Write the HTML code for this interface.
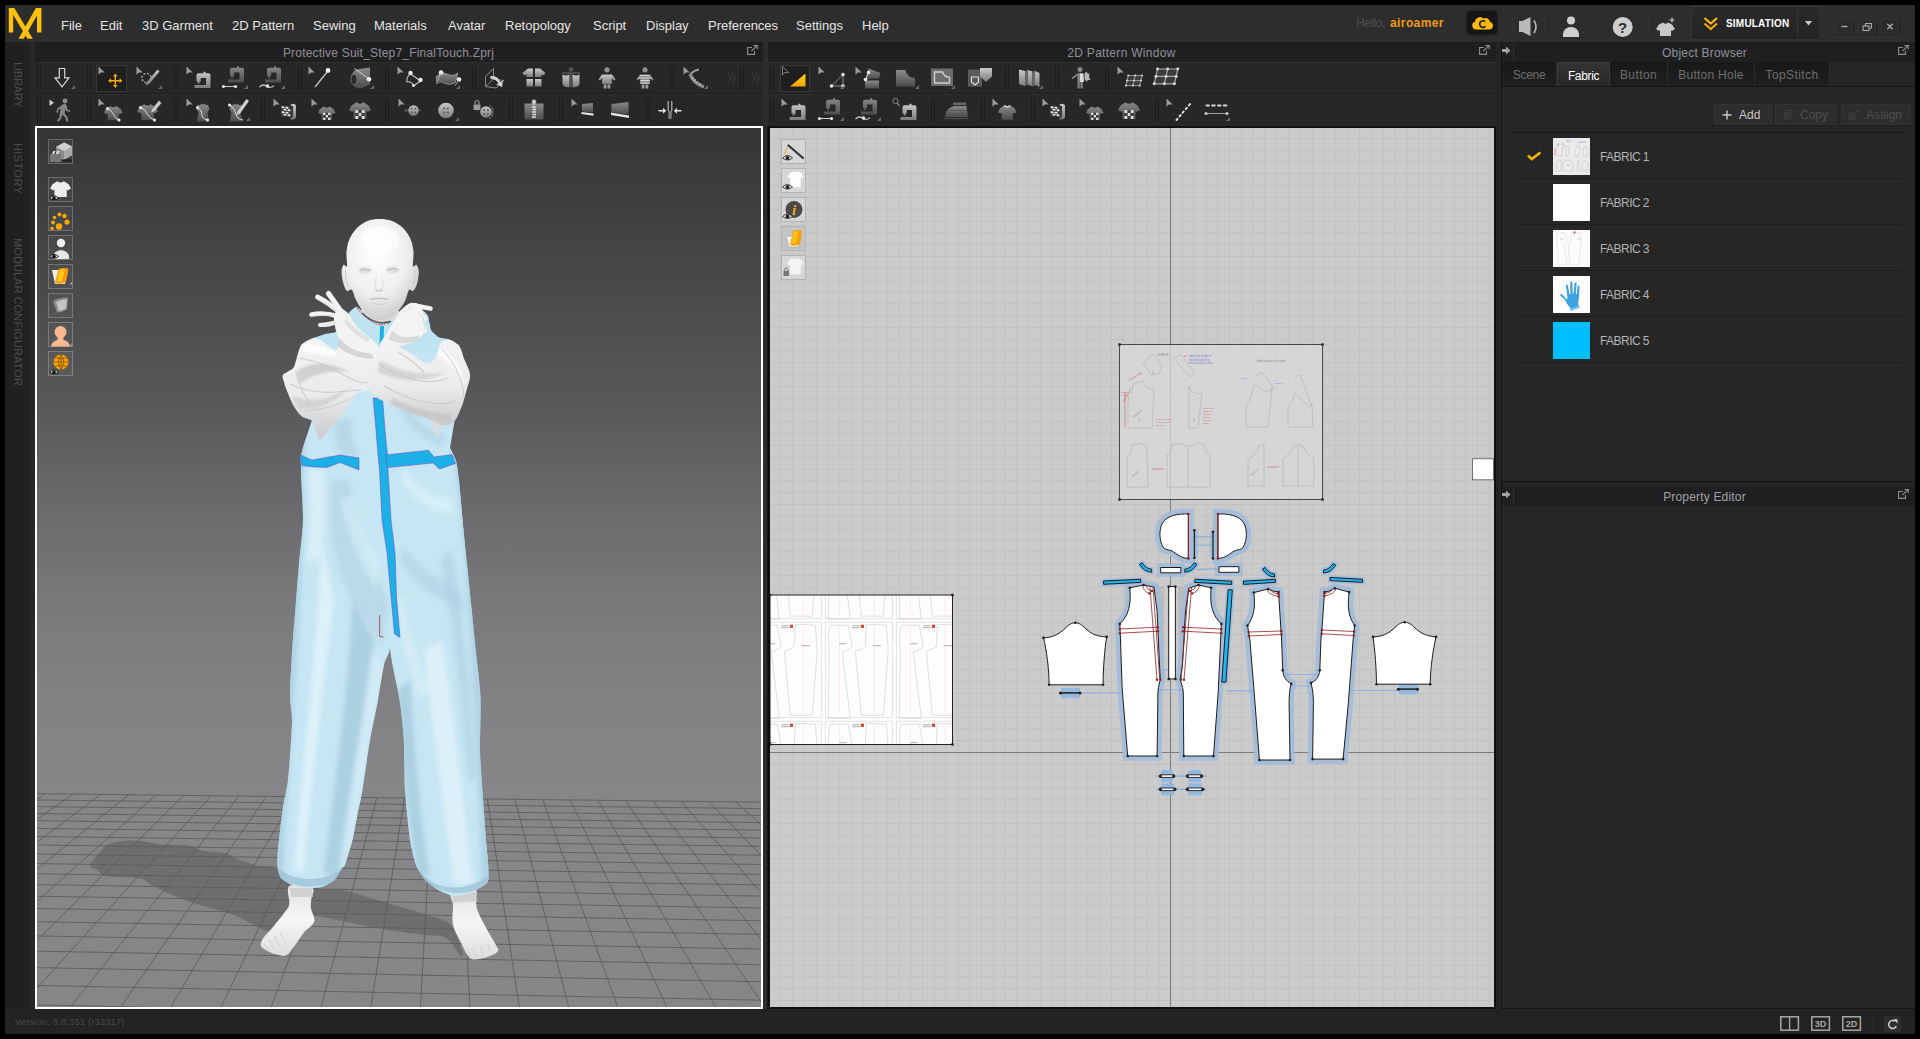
<!DOCTYPE html>
<html lang="en">
<head>
<meta charset="utf-8">
<title>Marvelous Designer - Protective Suit_Step7_FinalTouch.Zprj</title>
<style>
*{box-sizing:border-box;margin:0;padding:0}
html,body{width:1920px;height:1039px;overflow:hidden;background:#000}
body{font-family:"Liberation Sans",sans-serif;font-size:12px;color:#b4b4b4;position:relative}
.abs{position:absolute}
#app{position:absolute;left:5px;top:5px;width:1910px;height:1029px;background:#2c2c2c;overflow:hidden}
/* everything inside #app is positioned in page coordinates via this shim */
#pg{position:absolute;left:-5px;top:-5px;width:1920px;height:1039px}
#menubar{position:absolute;left:5px;top:5px;width:1910px;height:37px;background:#2d2d2d}
.mi{position:absolute;top:18px;height:16px;line-height:16px;font-size:13px;color:#e4e4e4;white-space:nowrap}
.title{position:absolute;top:42px;height:20px;background:#1f1f22;color:#8f9197;font-size:12px;line-height:20px;text-align:center;white-space:nowrap}
.tb{position:absolute;background:#272727}
#leftbar{position:absolute;left:5px;top:42px;width:30px;height:967px;background:linear-gradient(90deg,#202020 0,#202020 25px,#282828 25px)}
.vtxt{position:absolute;left:11px;width:14px;color:#4e4e4e;font-size:11px;letter-spacing:.4px;white-space:nowrap;transform-origin:0 0;transform:rotate(90deg) translate(0,-14px);line-height:14px;height:14px}
#status{position:absolute;left:5px;top:1009px;width:1910px;height:25px;background:#232323}
#v3d{position:absolute;left:35px;top:126px;width:728px;height:883px;border:2px solid #fff;overflow:hidden;background:linear-gradient(#353537 0%,#58585a 31%,#69696b 42.300%,#79797b 53.700%,#828284 65%,#868688 75.600%,#868688 100%)}
#v2d{position:absolute;left:768px;top:126px;width:728px;height:883px;border:2px solid #0f0f0f;box-shadow:-1px 0 0 #151515;overflow:hidden;background:#cbcbcb}
#rpanel{position:absolute;left:1502px;top:62px;width:1413px}
</style>
</head>
<body>
<div id="app"><div id="pg">

<!-- MENU BAR -->
<div id="menubar"></div>
<div id="menu-items">
<span class="mi" style="left:61px">File</span>
<span class="mi" style="left:100px">Edit</span>
<span class="mi" style="left:142px">3D Garment</span>
<span class="mi" style="left:232px">2D Pattern</span>
<span class="mi" style="left:313px">Sewing</span>
<span class="mi" style="left:374px">Materials</span>
<span class="mi" style="left:448px">Avatar</span>
<span class="mi" style="left:505px">Retopology</span>
<span class="mi" style="left:593px">Script</span>
<span class="mi" style="left:646px">Display</span>
<span class="mi" style="left:708px">Preferences</span>
<span class="mi" style="left:796px">Settings</span>
<span class="mi" style="left:862px">Help</span>
</div>
<div class="abs" style="left:1356px;top:16px;font-size:12px;line-height:15px;color:#4f4f4f;white-space:nowrap;letter-spacing:-.2px">Hello,</div>
<div class="abs" style="left:1390px;top:16px;font-size:12px;line-height:15px;color:#f49b0c;font-weight:bold;white-space:nowrap;letter-spacing:.4px">airoamer</div>
<div class="abs" style="left:1453px;top:15px;width:1px;height:18px;background:#333"></div>
<div class="abs" style="left:1512px;top:15px;width:1px;height:18px;background:#333"></div>
<div class="abs" style="left:1544px;top:15px;width:1px;height:18px;background:#333"></div>
<div class="abs" style="left:1597px;top:15px;width:1px;height:18px;background:#333"></div>
<div class="abs" style="left:1648px;top:15px;width:1px;height:18px;background:#333"></div>
<svg class="abs" style="left:1460px;top:5px" width="230" height="37" viewBox="1460 5 230 37">
<rect x="1466.5" y="10.5" width="31" height="24.5" rx="4" fill="#161616" stroke="#222" stroke-width="1"/>
<path d="M1476 29.5a4 4 0 0 1 -1 -7.8a5 5 0 0 1 8.5 -3.2a4.5 4.5 0 0 1 6.5 3.5a3.8 3.8 0 0 1 -1 7.5z" fill="#fbb90f"/>
<path d="M1485.2 21.6a3.3 3.3 0 1 0 .3 4.6" stroke="#1b1b1b" stroke-width="1.7" fill="none"/>
<path d="M1519 22h3.5l8 -4v19l-8 -4H1519z" fill="#b9b9b9" transform="translate(0 -1)"/><path d="M1534 20.5q4 6 0 12.5" stroke="#b9b9b9" stroke-width="1.6" fill="none"/>
<circle cx="1571" cy="20.5" r="4" fill="#cfcfcf"/><path d="M1563 37v-3a8 7 0 0 1 16 0v3z" fill="#cfcfcf"/>
<circle cx="1622.7" cy="27" r="10" fill="#cdcdcd"/><text x="1622.7" y="32.5" font-family="'Liberation Sans',sans-serif" font-weight="bold" font-size="15" text-anchor="middle" fill="#2b2b2b">?</text>
<path d="M1659 24.5l4 -2q2.5 2.5 5 0l4 2l3 4.5l-3.2 2l-.8 -1v6h-11v-6l-.8 1l-3.2 -2z" fill="#c9c9c9"/><path d="M1672 17.5v5M1669.5 20h5" stroke="#c9c9c9" stroke-width="1.2"/>
</svg>
<div class="abs" style="left:1691px;top:6px;width:129px;height:34px;background:linear-gradient(#2a2a2a,#232323);border:1px solid #333;border-top-color:#3a3a3a"></div>
<div class="abs" style="left:1797px;top:9px;width:1px;height:28px;background:#353535"></div>
<svg class="abs" style="left:1703px;top:16px" width="16" height="16" viewBox="0 0 16 16"><path d="M1.5 2L7.8 7.5L14 2" stroke="#fbb90f" stroke-width="2.2" fill="none"/><path d="M1.5 7.5L7.8 13L14 7.5" stroke="#f9a90a" stroke-width="2.2" fill="none"/></svg>
<div class="abs" style="left:1726px;top:17px;font-size:10px;line-height:13px;font-weight:bold;color:#fff;letter-spacing:.2px;white-space:nowrap">SIMULATION</div>
<svg class="abs" style="left:1805px;top:21px" width="8" height="5" viewBox="0 0 8 5"><path d="M0 0h7L3.5 4.6z" fill="#c9c9c9"/></svg>
<div class="abs" style="left:1835px;top:19px;width:18px;height:15px;background:#2b2b2b;border:1px solid #333;box-shadow:1px 1px 0 #1e1e1e"></div>
<div class="abs" style="left:1858px;top:19px;width:18px;height:15px;background:#2b2b2b;border:1px solid #333;box-shadow:1px 1px 0 #1e1e1e"></div>
<div class="abs" style="left:1881px;top:19px;width:18px;height:15px;background:#2b2b2b;border:1px solid #333;box-shadow:1px 1px 0 #1e1e1e"></div>
<svg class="abs" style="left:1835px;top:19px" width="66" height="15" viewBox="1835 19 66 15"><path d="M1841.5 26.5h6" stroke="#aaa" stroke-width="1.4"/><rect x="1863" y="26" width="6" height="4.5" fill="none" stroke="#aaa" stroke-width="1.1"/><path d="M1865.5 26v-2.5h6v4.5h-2.5" fill="none" stroke="#aaa" stroke-width="1.1"/><path d="M1887.3 23.8l5.4 5.4M1892.7 23.8l-5.4 5.4" stroke="#aaa" stroke-width="1.3"/></svg>
<svg class="abs" style="left:0;top:0" width="50" height="42" viewBox="0 0 50 42"><g fill="#fdc00d"><path d="M8.800 8h4.400V32.500H8.800z"/><path d="M37 8h4.400V32.500H37z"/><path d="M9 8h5.300L32.800 38.800h-5.300z"/><path d="M41.200 8H35.900L18.500 38.800h5.300z"/></g></svg>

<!-- LEFT BAR -->
<div id="leftbar"></div>
<div class="vtxt" style="top:62px;letter-spacing:-.2px">LIBRARY</div>
<div class="vtxt" style="top:143px">HISTORY</div>
<div class="vtxt" style="top:238px;letter-spacing:.08px">MODULAR CONFIGURATOR</div>

<!-- TITLES -->
<div class="title" style="left:35px;width:728px"><span style="position:relative;left:-10.5px;top:1px;letter-spacing:.19px">Protective Suit_Step7_FinalTouch.Zprj</span></div>
<div class="title" style="left:768px;width:728px"><span style="position:relative;left:-10.5px;top:1px;letter-spacing:.3px">2D Pattern Window</span></div>
<div class="title" style="left:1502px;width:413px"><span style="position:relative;left:-4px;top:1px;letter-spacing:.22px">Object Browser</span></div>

<!-- TOOLBARS -->
<div class="tb" style="left:35px;top:62px;width:728px;height:64px"></div>
<div class="tb" style="left:768px;top:62px;width:728px;height:64px"></div>
<div class="abs" style="left:35px;top:93px;width:728px;height:2px;background:#1e1e1e;border-bottom:1px solid #2e2e2e"></div>
<div class="abs" style="left:768px;top:93px;width:728px;height:2px;background:#1e1e1e;border-bottom:1px solid #2e2e2e"></div>
<div class="abs" style="left:35px;top:62px;width:728px;height:1px;background:#2f2f2f"></div>
<div class="abs" style="left:768px;top:62px;width:728px;height:1px;background:#2f2f2f"></div>
<svg class="abs" style="left:0;top:60px" width="1500" height="68" viewBox="0 60 1500 68">
<defs>
<linearGradient id="ig" x1="0" y1="0" x2="0" y2="1"><stop offset="0" stop-color="#c9c9c9"/><stop offset="1" stop-color="#7b7b7b"/></linearGradient>
<linearGradient id="igd" x1="0" y1="0" x2="0" y2="1"><stop offset="0" stop-color="#8a8a8a"/><stop offset="1" stop-color="#4c4c4c"/></linearGradient>
<linearGradient id="igy" x1="0" y1="0" x2="0" y2="1"><stop offset="0" stop-color="#ffd21a"/><stop offset="1" stop-color="#f7a400"/></linearGradient>
<path id="cur" d="M0 0V8.2L2.3 6.1H6.2Z" fill="#9c9c9c"/>
<path id="tri" d="M4 0V4H0Z" fill="#6a6a6a"/>
<path id="sm" d="M0 15.500V12.500H11.500V5.500H6.200V9H5V11H3.200V9H2V2.800Q2 .800 4 .800H9V-.800H11V.800H14Q16 .800 16 2.800V15.500Z"/>
<path id="shirt" d="M0 4.5L5 1.2Q8.5 4.3 12 1.2L17 4.5L19.5 9L16 11L15 9.8V18H2V9.8L1 11L-2.5 9Z"/>
</defs>
<path d="M37.5 66v24M40.5 66v24" stroke="#1b1b1b" stroke-width="1"/>
<path d="M87.5 66v24M90.5 66v24" stroke="#1b1b1b" stroke-width="1"/>
<path d="M174.5 66v24M177.5 66v24" stroke="#1b1b1b" stroke-width="1"/>
<path d="M298.5 66v24M301.5 66v24" stroke="#1b1b1b" stroke-width="1"/>
<path d="M385.5 66v24M388.5 66v24" stroke="#1b1b1b" stroke-width="1"/>
<path d="M472.5 66v24M475.5 66v24" stroke="#1b1b1b" stroke-width="1"/>
<path d="M670.5 66v24M673.5 66v24" stroke="#1b1b1b" stroke-width="1"/>
<path d="M740.5 66v24M743.5 66v24" stroke="#1b1b1b" stroke-width="1"/>
<path d="M37.5 98v24M40.5 98v24" stroke="#1b1b1b" stroke-width="1"/>
<path d="M87.5 98v24M90.5 98v24" stroke="#1b1b1b" stroke-width="1"/>
<path d="M174.5 98v24M177.5 98v24" stroke="#1b1b1b" stroke-width="1"/>
<path d="M261.5 98v24M264.5 98v24" stroke="#1b1b1b" stroke-width="1"/>
<path d="M385.5 98v24M388.5 98v24" stroke="#1b1b1b" stroke-width="1"/>
<path d="M509.5 98v24M512.5 98v24" stroke="#1b1b1b" stroke-width="1"/>
<path d="M559.5 98v24M562.5 98v24" stroke="#1b1b1b" stroke-width="1"/>
<path d="M646.5 98v24M649.5 98v24" stroke="#1b1b1b" stroke-width="1"/>
<path d="M770.5 66v24M773.5 66v24" stroke="#1b1b1b" stroke-width="1"/>
<path d="M1005.5 66v24M1008.5 66v24" stroke="#1b1b1b" stroke-width="1"/>
<path d="M1055.5 66v24M1058.5 66v24" stroke="#1b1b1b" stroke-width="1"/>
<path d="M1105.5 66v24M1108.5 66v24" stroke="#1b1b1b" stroke-width="1"/>
<path d="M770.5 98v24M773.5 98v24" stroke="#1b1b1b" stroke-width="1"/>
<path d="M931.5 98v24M934.5 98v24" stroke="#1b1b1b" stroke-width="1"/>
<path d="M981.5 98v24M984.5 98v24" stroke="#1b1b1b" stroke-width="1"/>
<path d="M1031.5 98v24M1034.5 98v24" stroke="#1b1b1b" stroke-width="1"/>
<path d="M1155.5 98v24M1158.5 98v24" stroke="#1b1b1b" stroke-width="1"/>
<g transform="translate(48.0 64.0)"><path d="M11.300 4.500h5.400v9.300h4.300L14 22.800L7 13.800h4.300z" fill="none" stroke="#dcdcdc" stroke-width="1.150" stroke-linejoin="miter"/><use href="#tri" x="23" y="21"/></g>
<rect x="96.5" y="65.5" width="30" height="26" fill="#1e1e1e" stroke="#383838"/>
<g transform="translate(97.0 64.0)"><use href="#cur" x="1.5" y="2.5"/><g transform="translate(18.3 16.7)" fill="#f7ab00"><path d="M-.7 -5h1.4v10h-1.4zM-5 -.7h10v1.4h-10z"/><path d="M0 -7.2l2.4 3h-4.8zM0 7.2l2.4 -3h-4.8zM-7.2 0l3 -2.4v4.8zM7.2 0l-3 -2.4v4.8z"/></g></g>
<g transform="translate(135.0 64.0)"><use href="#cur" x="1.5" y="2.5"/><circle cx="11.5" cy="14" r="4.6" fill="none" stroke="#b5b5b5" stroke-width="1.3" stroke-dasharray="2 1.6"/><path d="M22.5 5.5l2 2L14 20l-3.5 1.5L12 18z" fill="url(#ig)"/><use href="#tri" x="23" y="21"/></g>
<g transform="translate(185.0 64.0)"><use href="#cur" x="1.5" y="2.5"/><use href="#sm" x="9.5" y="8.5" fill="url(#ig)"/></g>
<g transform="translate(221.0 64.0)"><use href="#sm" x="7" y="3" fill="url(#igd)"/><path d="M2.5 22.5h12" stroke="#d0d0d0" stroke-width="1"/><circle cx="2.5" cy="22.5" r="1.6" fill="#e6e6e6"/><circle cx="14.5" cy="22.5" r="1.6" fill="#e6e6e6"/><use href="#tri" x="23" y="21"/></g>
<g transform="translate(258.0 64.0)"><use href="#sm" x="7" y="3" fill="url(#igd)"/><path d="M1.5 23q3.5-3.5 7-.8t7.5-.4" stroke="#bdbdbd" stroke-width="1.3" fill="none"/><circle cx="9.5" cy="22" r="1.7" fill="#eaeaea"/><use href="#tri" x="23" y="21"/></g>
<g transform="translate(307.0 64.0)"><use href="#cur" x="1.5" y="2.5"/><path d="M8 23L20.5 7.5" stroke="#c9c9c9" stroke-width="1.2"/><circle cx="21" cy="6.5" r="2.4" fill="#ededed"/></g>
<g transform="translate(347.0 64.0)"><path d="M4 14q0-7 8-9l11-1.5v17l-8 3.5q-6 1-9-3z" fill="url(#igd)"/><ellipse cx="7" cy="15.5" rx="3" ry="5.2" fill="#2a2a2a" stroke="#777" stroke-width=".8"/><path d="M7.5 4.5L22 15" stroke="#d5d5d5" stroke-width="1"/><circle cx="22" cy="15.2" r="2.3" fill="#efefef"/><use href="#tri" x="23" y="21"/></g>
<g transform="translate(396.0 64.0)"><use href="#cur" x="1.5" y="2.5"/><path d="M14 9.5q-4 5-3 8.5q4-1 7 3.5q3-2 6.500-4.500" stroke="#c5c5c5" stroke-width="1.1" fill="none"/><path d="M14 9.5q5 3.500 10.500 7.500" stroke="#c5c5c5" stroke-width="1.1" fill="none"/><circle cx="14.5" cy="9" r="2.2" fill="#ececec"/><circle cx="24.5" cy="16" r="2.2" fill="#ececec"/><circle cx="17.5" cy="21.5" r="1.6" fill="#dcdcdc"/></g>
<g transform="translate(433.0 64.0)"><path d="M3 13q5-6 11-3t11-1l-3 10q-6 3-11 0t-7 1z" fill="url(#igd)" stroke="#aaa" stroke-width=".7"/><circle cx="8" cy="8.500" r="2.300" fill="#ececec"/><circle cx="26" cy="15.5" r="2.300" fill="#ececec"/><path d="M8 8.500L4.500 17M26 15.500L22 22" stroke="#bbb" stroke-width=".8"/><use href="#tri" x="23" y="21"/></g>
<g transform="translate(481.0 64.0)"><path d="M4.500 22.500V12.500L12.500 4.500V15l10.500 1.500l-8 7.500z" fill="none" stroke="#8a8a8a" stroke-width="1"/><path d="M12.500 15L4.500 22.500" stroke="#8a8a8a" stroke-width="1"/><path d="M9.500 12q7-1 10 6l2.200-1.500l-.5 6.500l-6-2.500l2.200-1.200q-2.500-4.500-7.900-4.300z" fill="#d4d4d4"/></g>
<g transform="translate(520.0 64.0)"><path d="M2.500 9L8 4.500h5V13H6.500v-2.800L4.500 11.500zM25.500 9L20 4.500h-5V13h6.500v-2.800l2 1.300z" fill="url(#ig)"/><rect x="6.500" y="15" width="6.500" height="7.500" fill="url(#ig)"/><rect x="15" y="15" width="6.500" height="7.500" fill="url(#ig)"/></g>
<g transform="translate(557.0 64.0)"><circle cx="14" cy="5.500" r="2.300" fill="#555"/><path d="M5 9h18" stroke="#555" stroke-width="1.600"/><path d="M13 8h2v15h-2z" fill="#4a4a4a"/><path d="M5.500 10.500q3.500 2 7 0V23q-5 1-7-3zM22.500 10.500q-3.500 2-7 0V23q5 1 7-3z" fill="url(#ig)"/></g>
<g transform="translate(593.0 64.0)"><circle cx="14" cy="5.800" r="2.600" fill="#8f8f8f"/><path d="M9 10.500h10l3.500 5l-1.200 1l-2.500-2.500v6h-9.600v-6L6.700 16.500l-1.200-1z" fill="url(#ig)"/><path d="M10.700 20.500h2.800v4h-2.800zM14.500 20.500h2.800v4h-2.800z" fill="#9a9a9a"/></g>
<g transform="translate(631.0 64.0)"><circle cx="14" cy="5.800" r="2.600" fill="#8f8f8f"/><path d="M9 10.500h10l3.500 5l-1.200 1l-2.500-2.500v6h-9.600v-6L6.700 16.500l-1.200-1z" fill="#8a8a8a"/><path d="M9 11.500h10M7 14h14M9.200 16.500h9.600M9.200 19h9.600" stroke="#d8d8d8" stroke-width="1.100"/><path d="M10.700 20.500h2.800v4h-2.800zM14.500 20.500h2.800v4h-2.800z" fill="#9a9a9a"/></g>
<g transform="translate(681.0 64.0)"><use href="#cur" x="2.5" y="2.5"/><path d="M9 10q3 9 14 13" stroke="#8c8c8c" stroke-width="3.400" fill="none"/><path d="M11 14.500l2-1M13 17l1.800-1.500M15.500 19.200l1.500-1.800M18.500 21l1-2" stroke="#ddd" stroke-width=".9"/><path d="M9.500 10q4-4 8.500-4.500" stroke="#9a9a9a" stroke-width="1.800" fill="none"/><use href="#tri" x="23" y="21"/></g>
<path d="M728 73l3 5.500l-3 5.500M732 73l3 5.500l-3 5.500" stroke="#3a3a3a" stroke-width="1.200" fill="none"/>
<path d="M752 73l3 5.500l-3 5.500M756 73l3 5.500l-3 5.500" stroke="#3a3a3a" stroke-width="1.200" fill="none"/>
<g transform="translate(48.0 96.0)"><circle cx="17" cy="5" r="2.400" fill="#8d8d8d"/><path d="M15.500 8q2.500-1 3.200 1.500l.8 4l3 1.200l-.5 1.400l-3.800-1l-1-2l-.5 4.500l2.800 3.500l.8 4.500h-2l-.9-3.800l-3-3l-1.300 3.800l-2.500 3.200l-1.700-1l2.400-3.200l1.300-9l-2 1.200l-.7 3l-1.600-.3l.8-4z" fill="#858585"/><path d="M1.500 3.500l4.500 3.300l-4.500 3.300z" fill="#d0d0d0"/></g>
<g transform="translate(97.0 96.0)"><use href="#cur" x="1.5" y="2.5"/><g transform="translate(9 9) scale(.85)"><use href="#shirt" fill="url(#igd)"/></g><path d="M10.500 12.500q4.500 2 6 6t5.500 5.500" stroke="#d8d8d8" stroke-width="1" fill="none"/><circle cx="10.500" cy="12.500" r="1.600" fill="#eee"/><circle cx="22" cy="24" r="1.600" fill="#eee"/></g>
<g transform="translate(135.0 96.0)"><g transform="translate(4.500 7) scale(.95)"><use href="#shirt" fill="url(#igd)"/></g><path d="M5.500 11.500q5 2 7 6.500t7 6" stroke="#d8d8d8" stroke-width="1" fill="none"/><circle cx="5.500" cy="11.500" r="1.600" fill="#eee"/><circle cx="19.500" cy="24" r="1.600" fill="#eee"/><path d="M24 4.500l2.500 2.500l-7 8.500l-4 1.500l1.500-4z" fill="#cfcfcf" stroke="#555" stroke-width=".5"/></g>
<g transform="translate(185.0 96.0)"><use href="#cur" x="1.5" y="2.5"/><g transform="translate(4 2)"><path d="M9 6.500q2 1.500 3.500-1q1.500 2 3 0q1.500 2.500 3.500 1l1.500 5q-3 3-1.500 6l1.500 6H7.500l1.500-6q1.500-3-1.500-6z" fill="url(#igd)"/></g><path d="M12.500 11.500q5 3 4.500 7t5.500 5.500" stroke="#e0e0e0" stroke-width="1" fill="none"/><circle cx="12.500" cy="11.500" r="1.500" fill="#eee"/><circle cx="22.500" cy="24" r="1.500" fill="#eee"/></g>
<g transform="translate(223.0 96.0)"><g transform="translate(-1 2)"><path d="M9 6.500q2 1.500 3.500-1q1.500 2 3 0q1.500 2.500 3.500 1l1.500 5q-3 3-1.500 6l1.500 6H7.500l1.500-6q1.500-3-1.500-6z" fill="url(#igd)"/></g><path d="M6.500 9q6 4 6.500 9t7 6" stroke="#e0e0e0" stroke-width="1" fill="none"/><circle cx="6.500" cy="9" r="1.500" fill="#eee"/><path d="M23.500 3l2.500 2l-9 12.500l-3.500 1.500l1-3.500z" fill="#d2d2d2"/><use href="#tri" x="23" y="21"/></g>
<g transform="translate(272.0 96.0)"><use href="#cur" x="1.5" y="2.5"/><g transform="translate(9 8)"><path d="M0 3l4-2l8 3v11l-8-3l-4 1.500z" fill="#3a3a3a"/><path d="M0 3l2-1l2 1.500l-2 1zM4 3.500l2-1l2 1.500l-2 1zM2 5.500l2-1l2 1.500l-2 1zM0 8l2-1l2 1.500l-2 1zM4 8.500l2-1l2 1.500l-2 1zM2 10.500l2-1l2 1.500l-2 1zM6 6l2-1l2 1.500l-2 1zM6 11l2-1l2 1.500l-2 1z" fill="#e8e8e8"/><path d="M9 1q4.500-2.500 6 .5v12q-2 3-6 1.500q3-1 3-3V2.500q-1.500-1-3-1.500z" fill="url(#ig)"/></g></g>
<g transform="translate(310.0 96.0)"><use href="#cur" x="1.5" y="2.5"/><g transform="translate(10 9.500) scale(.8)"><use href="#shirt" fill="url(#igd)"/><g transform="translate(-1 1.500)"><path d="M5 7.500h3v3h-3zM11 7.500h3v3h-3zM8 10.500h3v3h-3zM5 13.500h3v3h-3zM11 13.500h3v3h-3z" fill="#dedede"/><path d="M8 7.500h3v3h-3zM5 10.500h3v3h-3zM11 10.500h3v3h-3zM8 13.500h3v3h-3z" fill="#3c3c3c"/></g></g></g>
<g transform="translate(346.0 96.0)"><g transform="translate(5.500 5) scale(1)"><use href="#shirt" fill="url(#igd)"/><g transform="translate(-1 1.500)"><path d="M5 7.500h3v3h-3zM11 7.500h3v3h-3zM8 10.500h3v3h-3zM5 13.500h3v3h-3zM11 13.500h3v3h-3z" fill="#dedede"/><path d="M8 7.500h3v3h-3zM5 10.500h3v3h-3zM11 10.500h3v3h-3zM8 13.500h3v3h-3z" fill="#3c3c3c"/></g></g></g>
<g transform="translate(397.0 96.0)"><use href="#cur" x="1.5" y="2.5"/><path d="M8.500 14.500h16" stroke="#555" stroke-width="1"/><circle cx="9" cy="14.500" r="1.200" fill="none" stroke="#666" stroke-width=".7"/><g transform="translate(16.500 14.500)"><circle cx="0" cy="0" r="5.2" fill="url(#ig)"/><g fill="#5a5a5a"><circle cx="-1.900" cy="-1.900" r="1"/><circle cx="1.900" cy="-1.900" r="1"/><circle cx="-1.900" cy="1.900" r="1"/><circle cx="1.900" cy="1.900" r="1"/></g></g></g>
<g transform="translate(432.0 96.0)"><g transform="translate(14 14.500)"><circle cx="0" cy="0" r="7.8" fill="url(#ig)"/><g fill="#5a5a5a"><circle cx="-1.900" cy="-1.900" r="1"/><circle cx="1.900" cy="-1.900" r="1"/><circle cx="-1.900" cy="1.900" r="1"/><circle cx="1.900" cy="1.900" r="1"/></g></g><use href="#tri" x="23" y="21"/></g>
<g transform="translate(470.0 96.0)"><g transform="translate(16 16)"><circle cx="0" cy="0" r="5.8" fill="url(#ig)"/><g fill="#5a5a5a"><circle cx="-1.900" cy="-1.900" r="1"/><circle cx="1.900" cy="-1.900" r="1"/><circle cx="-1.900" cy="1.900" r="1"/><circle cx="1.900" cy="1.900" r="1"/></g></g><path d="M19.500 9.500q4 1.500 3.500 7t-4 6" stroke="#777" stroke-width="1" fill="none"/><rect x="3.500" y="8.500" width="7" height="5.500" rx=".8" fill="#9a9a9a"/><path d="M5 8.500V6.500a2 2 0 0 1 4 0v2" stroke="#9a9a9a" stroke-width="1.200" fill="none"/></g>
<g transform="translate(520.0 96.0)"><rect x="4.500" y="7.500" width="19" height="16" fill="url(#igd)"/><path d="M14 3.500q-3 0-2 3.500l1 2.500h2l1-2.500q1-3.500-2-3.500z" fill="#cfcfcf" stroke="#666" stroke-width=".5"/><path d="M12 11h4M12.500 13.500h3.500M12 16h4M12.500 18.500h3.500M12 21h4" stroke="#e2e2e2" stroke-width="1.300"/></g>
<g transform="translate(570.0 96.0)"><use href="#cur" x="1.5" y="2.5"/><path d="M12 8l11-1v9.500l-11-1z" fill="url(#igd)"/><path d="M11.500 16l12 1.500v2.300l-12-1.800z" fill="#e4e4e4"/></g>
<g transform="translate(606.0 96.0)"><path d="M5.500 8l17-2v12.500l-17-2.500z" fill="url(#igd)"/><path d="M5 16.500l18 3v2.500l-18-3z" fill="#e4e4e4"/></g>
<g transform="translate(656.0 96.0)"><path d="M12.200 5v9q0 1.800 1.800 1.800t1.800-1.800V5" stroke="#b5b5b5" stroke-width="1.200" fill="none"/><path d="M12.200 15v7.500q1.800 1.500 3.600 0V15" fill="#777"/><path d="M2.500 14h4.500v-2.300l3.200 3l-3.200 3v-2.300H2.500zM25.500 14H21v-2.300l-3.200 3l3.200 3v-2.300h4.500z" fill="#e2e2e2"/></g>
<rect x="780.500" y="65.500" width="29" height="26" fill="#1e1e1e" stroke="#383838"/>
<g transform="translate(781.0 64.0)"><path d="M1.500 2.500v8.200l2.300-2.100h3.900z" fill="none" stroke="#8a8a8a" stroke-width=".9"/><path d="M9 22.500h15.500V9.500z" fill="url(#igy)"/></g>
<g transform="translate(817.0 64.0)"><use href="#cur" x="1.5" y="2.5"/><path d="M14.500 22h11.500V10.500z" fill="none" stroke="#8a8a8a" stroke-width="1"/><circle cx="14.500" cy="22" r="1.800" fill="#e6e6e6"/><circle cx="26" cy="22" r="1.800" fill="#e6e6e6"/><circle cx="26" cy="10.500" r="1.800" fill="#e6e6e6"/><use href="#tri" x="23" y="21"/></g>
<g transform="translate(854.0 64.0)"><use href="#cur" x="1.5" y="2.5"/><path d="M11 16.500h14v8H11z" fill="url(#igd)"/><path d="M11.500 15l3-10.500l12 4.500l-1.500 5.500z" fill="url(#igd)"/><path d="M11.500 15.500l3-7" stroke="#ddd" stroke-width="1"/><circle cx="14.500" cy="8.500" r="1.800" fill="#ececec"/><circle cx="11.500" cy="15.500" r="1.800" fill="#ececec"/></g>
<g transform="translate(892.0 64.0)"><path d="M4 6h9.500q1 7 9.500 8v8.500H4z" fill="url(#igd)"/><use href="#tri" x="23" y="21"/></g>
<g transform="translate(928.0 64.0)"><rect x="3" y="4.500" width="22" height="17.500" fill="#6d6d6d"/><path d="M6.500 8h8q1 4.500 7 5.500v5.500h-15z" fill="none" stroke="#cfcfcf" stroke-width="1.400"/><use href="#tri" x="23" y="21"/></g>
<g transform="translate(966.0 64.0)"><rect x="2" y="5.500" width="14" height="17" fill="#5a5a5a"/><path d="M14 4h12v8.500l-6 5.500l-6-5.500z" fill="url(#ig)"/><path d="M5.500 13h7v5l-3.500 3l-3.500-3z" fill="none" stroke="#e0e0e0" stroke-width="1.100"/></g>
<g transform="translate(1016.0 64.0)"><path d="M3 5.500l6 1.500v15l-6-2zM11.500 6l5 1.500v15l-5-2zM19 7l4.500 2v14l-4.500-2z" fill="url(#ig)"/><path d="M9 7l2.500-1v14.500l-2.500 1.500zM16.500 7.500l2.500-.5v14.500l-2.500 1z" fill="#666"/><use href="#tri" x="23" y="21"/></g>
<g transform="translate(1066.0 64.0)"><circle cx="14" cy="5.500" r="2.500" fill="#858585"/><path d="M11.500 9h5v9h-5z" fill="#858585"/><path d="M14 9.500h3.500l.5 8.500h-4z" fill="#d8d8d8"/><path d="M11.500 10.500L6 14.500" stroke="#858585" stroke-width="1.600"/><path d="M11.500 18h2.200v6.500h-2.200zM14.500 18h2.200v6.500h-2.200z" fill="#858585"/><path d="M18.500 9.500l2-2l1.500 2.500l1.500-.5l-.5 3.500l1.500 3h-3l-.5 2l-2.500-3z" fill="#b5b5b5"/></g>
<g transform="translate(1116.0 64.0)"><use href="#cur" x="1.5" y="2.5"/><g transform="translate(9.500 11.500)"><g transform="scale(0.92)"><path d="M3 0h15l-2.500 11h-15z" fill="#3c3c3c"/><path d="M3 0h15l-2.500 11h-15zM10.500 0l-2.500 11M1.800 5.500h15" stroke="#a8a8a8" stroke-width=".9" fill="none"/><g fill="#dadada"><circle cx="3" cy="0" r="1.100"/><circle cx="10.500" cy="0" r="1.100"/><circle cx="18" cy="0" r="1.100"/><circle cx="1.800" cy="5.500" r="1.100"/><circle cx="9.300" cy="5.500" r="1.100"/><circle cx="16.800" cy="5.500" r="1.100"/><circle cx=".5" cy="11" r="1.100"/><circle cx="8" cy="11" r="1.100"/><circle cx="15.500" cy="11" r="1.100"/></g></g></g></g>
<g transform="translate(1152.0 64.0)"><g transform="translate(1.500 5)"><g transform="scale(1.35)"><path d="M3 0h15l-2.500 11h-15z" fill="#3c3c3c"/><path d="M3 0h15l-2.500 11h-15zM10.500 0l-2.500 11M1.800 5.500h15" stroke="#a8a8a8" stroke-width=".9" fill="none"/><g fill="#dadada"><circle cx="3" cy="0" r="1.100"/><circle cx="10.500" cy="0" r="1.100"/><circle cx="18" cy="0" r="1.100"/><circle cx="1.800" cy="5.500" r="1.100"/><circle cx="9.300" cy="5.500" r="1.100"/><circle cx="16.800" cy="5.500" r="1.100"/><circle cx=".5" cy="11" r="1.100"/><circle cx="8" cy="11" r="1.100"/><circle cx="15.500" cy="11" r="1.100"/></g></g></g></g>
<g transform="translate(780.0 96.0)"><use href="#cur" x="1.5" y="2.5"/><use href="#sm" x="9.500" y="8.500" fill="url(#ig)"/></g>
<g transform="translate(817.0 96.0)"><use href="#sm" x="7" y="3" fill="url(#igd)"/><path d="M2.500 22.500h12" stroke="#d0d0d0" stroke-width="1"/><circle cx="2.500" cy="22.500" r="1.600" fill="#e6e6e6"/><circle cx="14.500" cy="22.500" r="1.600" fill="#e6e6e6"/><use href="#tri" x="23" y="21"/></g>
<g transform="translate(854.0 96.0)"><use href="#sm" x="7" y="3" fill="url(#igd)"/><path d="M1.500 23q3.500-3.500 7-.8t7.500-.4" stroke="#bdbdbd" stroke-width="1.300" fill="none"/><circle cx="9.500" cy="22" r="1.700" fill="#eaeaea"/><use href="#tri" x="23" y="21"/></g>
<g transform="translate(891.0 96.0)"><use href="#sm" x="9.500" y="8.500" fill="url(#ig)"/><circle cx="4.500" cy="5" r="2.600" fill="none" stroke="#8a8a8a" stroke-width="1"/><path d="M6.200 7.200l2.300 3" stroke="#8a8a8a" stroke-width="1.200"/></g>
<g transform="translate(942.0 96.0)"><path d="M3 21q1-9 9-11h12.500l1.500 11z" fill="url(#igd)"/><path d="M11 6.500h13v2.500h-13z" fill="#6a6a6a"/><path d="M2.500 22.500h24" stroke="#4a4a4a" stroke-width="1.500"/><path d="M6 14.500h19M4.500 17.500h21" stroke="#555" stroke-width=".8"/></g>
<g transform="translate(991.0 96.0)"><use href="#cur" x="1.5" y="2.5"/><g transform="translate(9 8.500) scale(.85)"><use href="#shirt" fill="url(#igd)"/><path d="M5 1.200q3.500 3.100 7 0" stroke="#e4e4e4" stroke-width="1.400" fill="none"/></g></g>
<g transform="translate(1041.0 96.0)"><use href="#cur" x="1.5" y="2.5"/><g transform="translate(9 8)"><path d="M0 3l4-2l8 3v11l-8-3l-4 1.500z" fill="#3a3a3a"/><path d="M0 3l2-1l2 1.500l-2 1zM4 3.500l2-1l2 1.500l-2 1zM2 5.500l2-1l2 1.500l-2 1zM0 8l2-1l2 1.500l-2 1zM4 8.500l2-1l2 1.500l-2 1zM2 10.500l2-1l2 1.500l-2 1zM6 6l2-1l2 1.500l-2 1zM6 11l2-1l2 1.500l-2 1z" fill="#e8e8e8"/><path d="M9 1q4.500-2.500 6 .5v12q-2 3-6 1.500q3-1 3-3V2.500q-1.500-1-3-1.500z" fill="url(#ig)"/></g></g>
<g transform="translate(1078.0 96.0)"><use href="#cur" x="1.5" y="2.5"/><g transform="translate(10 9.500) scale(.8)"><use href="#shirt" fill="url(#igd)"/><g transform="translate(-1 1.500)"><path d="M5 7.500h3v3h-3zM11 7.500h3v3h-3zM8 10.500h3v3h-3zM5 13.500h3v3h-3zM11 13.500h3v3h-3z" fill="#dedede"/><path d="M8 7.500h3v3h-3zM5 10.500h3v3h-3zM11 10.500h3v3h-3zM8 13.500h3v3h-3z" fill="#3c3c3c"/></g></g></g>
<g transform="translate(1115.0 96.0)"><g transform="translate(5.500 5) scale(1)"><use href="#shirt" fill="url(#igd)"/><g transform="translate(-1 1.500)"><path d="M5 7.500h3v3h-3zM11 7.500h3v3h-3zM8 10.500h3v3h-3zM5 13.500h3v3h-3zM11 13.500h3v3h-3z" fill="#dedede"/><path d="M8 7.500h3v3h-3zM5 10.500h3v3h-3zM11 10.500h3v3h-3zM8 13.500h3v3h-3z" fill="#3c3c3c"/></g></g></g>
<g transform="translate(1165.0 96.0)"><use href="#cur" x="1.5" y="2.5"/><path d="M11.500 24L25 8" stroke="#dedede" stroke-width="2" stroke-dasharray="1.600 3.200" stroke-linecap="round"/></g>
<g transform="translate(1203.0 96.0)"><path d="M3.500 9.500h20" stroke="#d5d5d5" stroke-width="2.200" stroke-dasharray="2.400 3.400" stroke-linecap="round"/><path d="M3 17.500h21" stroke="#9a9a9a" stroke-width="1"/><circle cx="3" cy="17.500" r="1.500" fill="#cfcfcf"/><circle cx="24" cy="17.500" r="1.500" fill="#cfcfcf"/><use href="#tri" x="23" y="21"/></g>
</svg>

<!-- 3D VIEW -->
<div id="v3d">
<svg class="abs" style="left:-37px;top:-128px" width="1920" height="1039" viewBox="0 0 1920 1039">

<defs>
<linearGradient id="gLegL" x1="0" x2="1" y1="0" y2="0"><stop offset="0" stop-color="#b3d6e5"/><stop offset=".15" stop-color="#c8e5f1"/><stop offset=".45" stop-color="#d3ecf6"/><stop offset=".75" stop-color="#c4e2ef"/><stop offset="1" stop-color="#b0d3e3"/></linearGradient>
<linearGradient id="gLegR" x1="0" x2="1" y1="0" y2="0"><stop offset="0" stop-color="#b5d7e6"/><stop offset=".25" stop-color="#cbe7f2"/><stop offset=".55" stop-color="#d3ecf6"/><stop offset=".85" stop-color="#c3e1ee"/><stop offset="1" stop-color="#add1e1"/></linearGradient>
<linearGradient id="gTorso" x1="0" x2="1" y1="0" y2="0"><stop offset="0" stop-color="#b5d7e6"/><stop offset=".15" stop-color="#c6e4f0"/><stop offset=".45" stop-color="#d2ebf5"/><stop offset=".75" stop-color="#cbe7f2"/><stop offset="1" stop-color="#b1d4e3"/></linearGradient>
<radialGradient id="gHead" cx=".45" cy=".35" r=".75"><stop offset="0" stop-color="#ffffff"/><stop offset=".55" stop-color="#eeeeee"/><stop offset="1" stop-color="#bdbdbd"/></radialGradient>
<linearGradient id="gSleeve" x1="0" x2="0" y1="0" y2="1"><stop offset="0" stop-color="#f2f3f4"/><stop offset=".55" stop-color="#e9ebec"/><stop offset="1" stop-color="#c9cbcd"/></linearGradient>
<linearGradient id="gFoot" x1="0" x2="0" y1="0" y2="1"><stop offset="0" stop-color="#e2e2e2"/><stop offset=".5" stop-color="#f6f6f6"/><stop offset="1" stop-color="#dcdcdc"/></linearGradient>
<filter id="b1" x="-5%" y="-5%" width="110%" height="110%"><feGaussianBlur stdDeviation="1.2"/></filter>
<filter id="b2" x="-10%" y="-10%" width="120%" height="120%"><feGaussianBlur stdDeviation="2.5"/></filter>
<filter id="b05"><feGaussianBlur stdDeviation="0.5"/></filter>
</defs>
<path d="M89.9 865.3C90.2 863.1 96.8 855.8 99.2 853.0C101.6 850.2 104.7 845.8 108.0 844.2C111.3 842.6 119.2 841.3 123.6 840.9C128.0 840.5 136.6 840.5 141.3 840.9C146.0 841.3 152.8 843.6 159.0 844.2C165.2 844.8 181.9 844.4 187.8 845.3C193.7 846.2 198.3 849.9 203.3 850.9C208.3 851.9 220.7 851.8 225.4 853.0C230.1 854.2 234.6 858.1 238.7 859.7C242.8 861.3 251.4 864.1 256.4 865.3C261.4 866.5 271.9 866.6 276.4 868.6C280.9 870.6 284.2 877.3 290.0 880.0C295.8 882.7 312.5 887.5 320.0 889.0C327.5 890.5 337.3 889.2 346.0 891.0C354.7 892.8 374.7 899.3 385.4 902.5C396.1 905.7 417.3 911.8 426.0 914.7C434.7 917.6 445.6 919.5 450.4 924.2C455.2 928.9 460.6 945.8 462.0 950.0C463.4 954.2 463.1 957.6 461.0 956.0C458.9 954.4 451.0 940.5 446.3 937.7C441.6 934.9 434.1 936.1 426.0 935.0C417.9 933.9 396.2 931.4 385.4 929.6C374.6 927.8 354.2 923.3 344.8 921.5C335.4 919.7 321.0 916.0 315.0 916.0C309.0 916.0 304.8 920.0 299.7 921.8C294.6 923.6 281.2 928.4 276.6 929.6C272.0 930.8 268.6 931.3 265.3 930.6C262.0 929.9 256.1 926.1 252.0 924.0C247.9 921.9 239.6 917.1 234.3 915.0C229.0 912.9 218.0 910.2 212.1 908.4C206.2 906.6 195.9 903.9 190.0 901.8C184.1 899.7 173.2 895.4 167.9 893.0C162.6 890.6 153.6 885.9 150.1 884.0C146.6 882.1 144.8 879.4 141.3 878.5C137.8 877.6 128.6 877.8 123.6 877.4C118.6 877.0 107.1 876.2 103.6 875.2C100.1 874.2 98.8 871.0 97.0 869.7C95.2 868.4 89.6 867.5 89.9 865.3Z" fill="#6e6e70"/>
<path d="M30.0 793.6L770.0 802.3 M30.0 799.9L770.0 808.7 M30.0 806.5L770.0 815.5 M30.0 813.4L770.0 822.7 M30.0 820.6L770.0 830.2 M30.0 828.3L770.0 838.1 M30.0 836.4L770.0 846.4 M30.0 844.9L770.0 855.3 M30.0 854.0L770.0 864.6 M30.0 863.5L770.0 874.5 M30.0 873.7L770.0 885.0 M30.0 884.5L770.0 896.2 M30.0 896.1L770.0 908.1 M30.0 908.4L770.0 920.9 M30.0 921.6L770.0 934.5 M30.0 935.8L770.0 949.2 M30.0 951.0L770.0 964.9 M30.0 967.5L770.0 981.9 M30.0 985.3L770.0 1000.4 M30.0 1004.7L770.0 1020.4 M30.0 1025.8L770.0 1042.2 M-645.0 785.8L-1644.9 1015.0 M-617.4 786.1L-1589.3 1015.0 M-589.8 786.4L-1534.0 1015.0 M-562.1 786.7L-1478.7 1015.0 M-534.5 787.1L-1423.6 1015.0 M-506.9 787.4L-1368.6 1015.0 M-479.3 787.7L-1313.8 1015.0 M-451.7 788.0L-1259.1 1015.0 M-424.0 788.3L-1204.6 1015.0 M-396.4 788.7L-1150.2 1015.0 M-368.8 789.0L-1095.9 1015.0 M-341.2 789.3L-1041.8 1015.0 M-313.6 789.6L-987.8 1015.0 M-285.9 790.0L-933.9 1015.0 M-258.3 790.3L-880.2 1015.0 M-230.7 790.6L-826.6 1015.0 M-203.1 790.9L-773.2 1015.0 M-175.5 791.2L-719.9 1015.0 M-147.8 791.6L-666.7 1015.0 M-120.2 791.9L-613.6 1015.0 M-92.6 792.2L-560.7 1015.0 M-65.0 792.5L-507.9 1015.0 M-37.4 792.9L-455.3 1015.0 M-9.7 793.2L-402.8 1015.0 M17.9 793.5L-350.4 1015.0 M45.5 793.8L-298.1 1015.0 M73.1 794.1L-246.0 1015.0 M100.7 794.5L-194.0 1015.0 M128.4 794.8L-142.2 1015.0 M156.0 795.1L-90.4 1015.0 M183.6 795.4L-38.8 1015.0 M211.2 795.8L12.7 1015.0 M238.8 796.1L64.0 1015.0 M266.5 796.4L115.2 1015.0 M294.1 796.7L166.3 1015.0 M321.7 797.0L217.3 1015.0 M349.3 797.4L268.2 1015.0 M376.9 797.7L318.9 1015.0 M404.6 798.0L369.5 1015.0 M432.2 798.3L420.0 1015.0 M459.8 798.7L470.3 1015.0 M487.4 799.0L520.5 1015.0 M515.0 799.3L570.7 1015.0 M542.7 799.6L620.6 1015.0 M570.3 799.9L670.5 1015.0 M597.9 800.3L720.2 1015.0 M625.5 800.6L769.9 1015.0 M653.1 800.9L819.4 1015.0 M680.8 801.2L868.7 1015.0 M708.4 801.6L918.0 1015.0 M736.0 801.9L967.1 1015.0 M763.6 802.2L1016.2 1015.0 M791.2 802.5L1065.1 1015.0 M818.9 802.8L1113.8 1015.0 M846.5 803.2L1162.5 1015.0 M874.1 803.5L1211.1 1015.0 M901.7 803.8L1259.5 1015.0 M929.3 804.1L1307.8 1015.0 M957.0 804.5L1356.0 1015.0 M984.6 804.8L1404.1 1015.0 M1012.2 805.1L1452.1 1015.0 M1039.8 805.4L1499.9 1015.0 M1067.4 805.7L1547.7 1015.0 M1095.1 806.1L1595.3 1015.0 M1122.7 806.4L1642.8 1015.0 M1150.3 806.7L1690.2 1015.0 M1177.9 807.0L1737.5 1015.0 M1205.5 807.4L1784.7 1015.0 M1233.2 807.7L1831.8 1015.0 M1260.8 808.0L1878.7 1015.0 M1288.4 808.3L1925.6 1015.0 M1316.0 808.6L1972.3 1015.0 M1343.6 809.0L2018.9 1015.0 M1371.3 809.3L2065.4 1015.0 M1398.9 809.6L2111.9 1015.0 M1426.5 809.9L2158.1 1015.0 M1454.1 810.3L2204.3 1015.0 M1481.7 810.6L2250.4 1015.0 M1509.4 810.9L2296.4 1015.0 M1537.0 811.2L2342.3 1015.0 M1564.6 811.5L2388.0 1015.0 M1592.2 811.9L2433.7 1015.0 M1619.8 812.2L2479.2 1015.0 M1647.5 812.5L2524.6 1015.0 M1675.1 812.8L2570.0 1015.0" stroke="#5c5c5e" stroke-width="1" fill="none" stroke-opacity=".85"/>

<path d="M289.3 886.0C293.1 883.4 308.6 886.0 312.3 888.0C316.0 890.0 311.7 894.7 311.5 898.0C311.3 901.3 310.4 904.0 310.9 907.9C311.4 911.8 315.4 917.4 314.3 921.5C313.2 925.6 307.5 928.2 304.2 932.3C300.9 936.3 297.6 942.0 294.7 945.8C291.8 949.6 289.5 953.8 286.6 955.3C283.7 956.8 280.3 955.2 277.1 954.5C273.9 953.8 270.3 952.7 267.6 951.2C264.9 949.8 261.5 948.0 260.8 945.8C260.1 943.5 261.5 940.9 263.5 937.7C265.5 934.6 269.6 931.0 273.0 926.9C276.4 922.8 281.2 917.1 283.9 913.3C286.6 909.5 288.4 908.4 289.3 903.9C290.2 899.4 285.5 888.6 289.3 886.0Z" fill="url(#gFoot)"/>
<path d="M451.8 892.0C455.4 889.3 470.8 887.7 474.8 889.0C478.8 890.3 475.6 896.4 476.0 900.0C476.4 903.6 475.9 906.1 477.5 910.6C479.1 915.1 482.5 921.0 485.6 926.9C488.8 932.8 494.4 941.8 496.4 945.8C498.4 949.8 499.1 949.4 497.8 951.2C496.5 953.0 492.4 955.3 488.3 956.7C484.2 958.1 477.0 959.9 473.4 959.4C469.8 958.9 468.7 956.7 466.7 954.0C464.7 951.3 463.2 947.2 461.2 943.1C459.2 939.0 456.0 933.7 454.5 929.6C453.0 925.5 452.6 922.8 452.4 918.7C452.2 914.6 453.2 909.7 453.1 905.2C453.0 900.8 448.2 894.7 451.8 892.0Z" fill="url(#gFoot)"/>
<path d="M264 944l5 7M269 940l5 9M274.500 936l5 10M280 932l5 11M466 948l5 8M473 948l3 9M480 946l3 8M487 943l3 8" stroke="#cfcfcf" stroke-width=".9" fill="none"/>
<path d="M290 888L312 888L313 897L291 897Z" fill="#d0d0d0"/>
<path d="M452 894L476 892L477 901L453 903Z" fill="#d0d0d0"/>
<clipPath id="bodyclip"><path d="M318.0 430.0C307.3 431.9 306.0 441.3 304.0 446.0C302.0 450.7 301.1 461.4 301.0 470.0C300.9 478.6 303.2 509.0 303.0 520.0C302.8 531.0 299.9 553.7 299.0 564.0C298.1 574.3 296.3 597.6 295.5 608.0C294.7 618.4 292.6 642.6 292.0 653.0C291.4 663.4 290.0 689.0 290.0 697.0C290.0 705.0 292.2 712.3 292.0 722.0C291.8 731.7 289.1 770.1 288.0 780.0C286.9 789.9 284.2 798.8 283.0 807.0C281.8 815.2 278.6 843.1 278.0 850.0C277.4 856.9 277.1 862.7 277.5 866.0C277.9 869.3 279.3 875.8 281.0 878.0C282.7 880.2 288.9 883.8 292.0 885.0C295.1 886.2 304.5 887.8 308.0 888.0C311.5 888.2 319.0 887.9 322.0 887.0C325.0 886.1 331.7 882.2 334.0 880.0C336.3 877.8 340.7 869.8 342.0 868.0C343.3 866.2 343.8 868.3 345.0 865.0C346.2 861.7 351.0 846.2 352.5 840.0C354.0 833.8 356.8 817.8 358.0 812.0C359.2 806.2 361.1 798.4 362.5 790.0C363.9 781.6 368.2 750.2 370.0 740.0C371.8 729.8 375.9 711.2 377.5 702.5C379.1 693.8 382.5 671.4 384.0 665.0C385.5 658.6 388.7 655.6 390.0 648.0C391.3 640.4 394.1 614.9 395.0 600.0C395.9 585.1 397.9 539.8 398.0 520.0C398.1 500.2 405.3 440.5 396.0 430.0C386.7 419.5 328.7 428.1 318.0 430.0Z"/><path d="M380.0 430.0C373.1 440.5 380.5 500.2 381.0 520.0C381.5 539.8 382.9 585.1 384.0 600.0C385.1 614.9 389.0 640.4 390.0 648.0C391.0 655.6 391.3 658.6 392.5 665.0C393.7 671.4 398.7 693.8 400.0 702.5C401.3 711.2 403.2 729.8 403.8 740.0C404.3 750.2 404.3 778.3 405.0 790.0C405.7 801.7 408.7 831.2 410.0 840.0C411.3 848.8 414.4 860.6 416.0 865.0C417.6 869.4 421.4 875.1 424.0 878.0C426.6 880.9 434.5 887.9 438.0 890.0C441.5 892.1 450.7 895.5 454.0 896.0C457.3 896.5 463.2 894.8 466.0 894.0C468.8 893.2 475.4 890.5 478.0 889.0C480.6 887.5 486.8 884.1 488.0 881.0C489.2 877.9 488.2 866.8 488.0 862.0C487.8 857.2 486.6 848.2 486.0 840.0C485.4 831.8 483.2 802.5 482.5 792.0C481.8 781.5 480.2 761.1 480.0 750.0C479.8 738.9 481.0 708.3 480.5 697.0C480.0 685.7 477.1 663.4 476.0 653.0C474.9 642.6 472.6 618.4 471.5 608.0C470.4 597.6 468.1 574.3 467.0 564.0C465.9 553.7 463.4 529.8 462.5 520.0C461.6 510.2 459.8 486.9 459.0 480.0C458.2 473.1 457.3 465.2 456.0 461.0C454.7 456.8 449.9 447.6 448.0 444.0C446.1 440.4 447.9 431.6 440.0 430.0C432.1 428.4 386.9 419.5 380.0 430.0Z"/><path d="M313.0 338.0L340.0 331.0L349.0 313.0L357.0 307.0L378.0 324.0L402.0 314.0L421.0 310.0L430.0 325.0L431.0 336.5L448.0 338.9L459.0 345.0L462.0 360.0L458.0 400.0L450.0 448.0L456.0 461.0L456.0 478.0L460.5 499.0L462.5 520.0L466.0 560.0L470.0 600.0L440.0 640.0L388.0 648.0L330.0 640.0L298.0 600.0L300.0 560.0L305.0 520.0L306.0 499.0L301.5 478.0L300.5 457.0L304.0 444.0L312.0 420.0L300.0 360.0Z"/></clipPath>
<path d="M318.0 430.0C307.3 431.9 306.0 441.3 304.0 446.0C302.0 450.7 301.1 461.4 301.0 470.0C300.9 478.6 303.2 509.0 303.0 520.0C302.8 531.0 299.9 553.7 299.0 564.0C298.1 574.3 296.3 597.6 295.5 608.0C294.7 618.4 292.6 642.6 292.0 653.0C291.4 663.4 290.0 689.0 290.0 697.0C290.0 705.0 292.2 712.3 292.0 722.0C291.8 731.7 289.1 770.1 288.0 780.0C286.9 789.9 284.2 798.8 283.0 807.0C281.8 815.2 278.6 843.1 278.0 850.0C277.4 856.9 277.1 862.7 277.5 866.0C277.9 869.3 279.3 875.8 281.0 878.0C282.7 880.2 288.9 883.8 292.0 885.0C295.1 886.2 304.5 887.8 308.0 888.0C311.5 888.2 319.0 887.9 322.0 887.0C325.0 886.1 331.7 882.2 334.0 880.0C336.3 877.8 340.7 869.8 342.0 868.0C343.3 866.2 343.8 868.3 345.0 865.0C346.2 861.7 351.0 846.2 352.5 840.0C354.0 833.8 356.8 817.8 358.0 812.0C359.2 806.2 361.1 798.4 362.5 790.0C363.9 781.6 368.2 750.2 370.0 740.0C371.8 729.8 375.9 711.2 377.5 702.5C379.1 693.8 382.5 671.4 384.0 665.0C385.5 658.6 388.7 655.6 390.0 648.0C391.3 640.4 394.1 614.9 395.0 600.0C395.9 585.1 397.9 539.8 398.0 520.0C398.1 500.2 405.3 440.5 396.0 430.0C386.7 419.5 328.7 428.1 318.0 430.0Z" fill="#c6e6f3"/><path d="M380.0 430.0C373.1 440.5 380.5 500.2 381.0 520.0C381.5 539.8 382.9 585.1 384.0 600.0C385.1 614.9 389.0 640.4 390.0 648.0C391.0 655.6 391.3 658.6 392.5 665.0C393.7 671.4 398.7 693.8 400.0 702.5C401.3 711.2 403.2 729.8 403.8 740.0C404.3 750.2 404.3 778.3 405.0 790.0C405.7 801.7 408.7 831.2 410.0 840.0C411.3 848.8 414.4 860.6 416.0 865.0C417.6 869.4 421.4 875.1 424.0 878.0C426.6 880.9 434.5 887.9 438.0 890.0C441.5 892.1 450.7 895.5 454.0 896.0C457.3 896.5 463.2 894.8 466.0 894.0C468.8 893.2 475.4 890.5 478.0 889.0C480.6 887.5 486.8 884.1 488.0 881.0C489.2 877.9 488.2 866.8 488.0 862.0C487.8 857.2 486.6 848.2 486.0 840.0C485.4 831.8 483.2 802.5 482.5 792.0C481.8 781.5 480.2 761.1 480.0 750.0C479.8 738.9 481.0 708.3 480.5 697.0C480.0 685.7 477.1 663.4 476.0 653.0C474.9 642.6 472.6 618.4 471.5 608.0C470.4 597.6 468.1 574.3 467.0 564.0C465.9 553.7 463.4 529.8 462.5 520.0C461.6 510.2 459.8 486.9 459.0 480.0C458.2 473.1 457.3 465.2 456.0 461.0C454.7 456.8 449.9 447.6 448.0 444.0C446.1 440.4 447.9 431.6 440.0 430.0C432.1 428.4 386.9 419.5 380.0 430.0Z" fill="#c6e6f3"/><path d="M313.0 338.0L340.0 331.0L349.0 313.0L357.0 307.0L378.0 324.0L402.0 314.0L421.0 310.0L430.0 325.0L431.0 336.5L448.0 338.9L459.0 345.0L462.0 360.0L458.0 400.0L450.0 448.0L456.0 461.0L456.0 478.0L460.5 499.0L462.5 520.0L466.0 560.0L470.0 600.0L440.0 640.0L388.0 648.0L330.0 640.0L298.0 600.0L300.0 560.0L305.0 520.0L306.0 499.0L301.5 478.0L300.5 457.0L304.0 444.0L312.0 420.0L300.0 360.0Z" fill="#c6e6f3"/>
<g clip-path="url(#bodyclip)"><g filter="url(#b2)">
<path d="M296 440 C292 520 288 620 284 700 L272 860 L284 884 C284 800 296 700 300 600 C304 540 302 480 306 440Z" fill="#a9cedf" opacity=".75"/>
<path d="M462 440 C470 520 476 600 482 700 L492 870 L482 890 C480 800 474 700 468 600 C464 540 458 480 452 440Z" fill="#a9cedf" opacity=".8"/>
<path d="M322 540 C316 640 308 720 300 800 L294 870 L304 872 C310 800 322 700 334 600Z" fill="#e1f3fa" opacity=".85"/>
<path d="M352 600 C352 660 338 760 324 874 L338 876 C348 790 368 700 374 640Z" fill="#9ac1d4" opacity=".6"/>
<path d="M372 650 C366 700 356 760 346 850 L352 852 C362 770 376 710 386 670Z" fill="#d8eef8" opacity=".6"/>
<path d="M424 650 C432 720 442 800 454 884 L472 884 C464 800 454 720 442 640Z" fill="#e1f3fa" opacity=".8"/>
<path d="M398 690 C402 760 408 820 418 872 L430 878 C420 820 414 740 410 680Z" fill="#9ac1d4" opacity=".6"/>
<path d="M440 560 C452 620 462 700 468 780 L476 780 C472 700 464 620 452 550Z" fill="#9ac1d4" opacity=".35"/>
<path d="M332 480 C328 520 332 560 352 600 L382 644 L388 600 C368 560 352 520 350 480Z" fill="#a9cedf" opacity=".5"/>
<path d="M400 560 C420 590 440 600 464 612 L462 592 C442 582 420 570 404 548Z" fill="#a9cedf" opacity=".5"/>
<path d="M396 600 C400 640 410 680 420 700 L430 690 C418 660 408 630 404 596Z" fill="#d8eef8" opacity=".7"/>
<path d="M308 470 C312 500 312 530 306 560 L318 560 C326 530 326 500 324 470Z" fill="#e1f3fa" opacity=".7"/>
<path d="M400 476 C410 500 430 512 454 514 L454 500 C432 496 414 488 404 468Z" fill="#e1f3fa" opacity=".6"/>
<path d="M336 420 C334 440 336 450 344 456 L360 456 C352 444 350 432 352 418Z" fill="#a9cedf" opacity=".55"/>
<path d="M400 410 C410 430 424 440 444 446 L446 436 C428 430 414 420 408 406Z" fill="#a9cedf" opacity=".5"/>
<path d="M340 500 C350 540 362 570 376 590 L380 560 C366 540 356 520 352 496Z" fill="#d8eef8" opacity=".6"/>
</g></g>
<path d="M279 868 C290 880 320 884 340 870 L336 880 C320 890 292 888 280 878Z" fill="#93bace" opacity=".6" filter="url(#b05)"/>
<path d="M418 868 C430 888 460 896 488 876 L488 883 C470 898 440 896 424 880Z" fill="#93bace" opacity=".6" filter="url(#b05)"/>
<path d="M373.0 398.0L382.5 398.0L385.0 430.0L387.5 455.0L388.0 470.0L391.0 520.0L395.0 553.0L396.5 597.0L400.0 637.5L394.5 634.0L391.0 597.0L387.0 553.0L382.0 520.0L379.5 470.0L378.0 455.0L376.0 430.0Z" fill="#1cb0e6" stroke="#7a3fc0" stroke-width=".5"/>
<path d="M300.5 455.0L312.0 460.0L326.0 457.5L340.0 455.0L359.0 458.0L359.0 470.0L340.0 462.5L327.0 467.5L314.0 467.0L301.5 465.5Z" fill="#1cb0e6" stroke="#7a3fc0" stroke-width=".5"/>
<path d="M385.5 455.0L428.5 450.3L434.0 457.0L452.0 454.5L455.5 463.5L439.5 469.0L433.0 463.0L387.5 467.6Z" fill="#1cb0e6" stroke="#7a3fc0" stroke-width=".5"/>
<path d="M379.6 615L379.6 636.3L383.4 637" stroke="#b03a3a" stroke-width=".8" fill="none"/>
<path d="M362 300 L360 326 L376 336 L400 326 L398 300Z" fill="#d9d9d9"/>
<path d="M379.5 219.0C383.6 219.0 388.1 219.5 392.0 221.0C395.9 222.5 399.9 225.0 403.0 228.0C406.1 231.0 408.8 235.0 410.5 239.0C412.2 243.0 413.1 247.5 413.5 252.0C413.9 256.5 412.5 263.8 413.0 266.0C413.5 268.2 415.5 264.0 416.5 265.0C417.5 266.0 418.7 268.8 418.8 272.0C418.9 275.2 418.0 280.8 417.0 284.0C416.0 287.2 414.3 290.0 413.0 291.0C411.7 292.0 410.3 288.3 409.0 290.0C407.7 291.7 406.8 297.5 405.0 301.0C403.2 304.5 400.8 308.1 398.0 311.0C395.2 313.9 391.0 317.0 388.0 318.5C385.0 320.0 382.7 320.1 380.0 320.0C377.3 319.9 374.8 319.5 372.0 318.0C369.2 316.5 365.7 314.0 363.0 311.0C360.3 308.0 357.8 303.5 356.0 300.0C354.2 296.5 353.5 291.5 352.0 290.0C350.5 288.5 348.4 292.0 347.0 291.0C345.6 290.0 344.4 287.2 343.5 284.0C342.6 280.8 341.5 275.2 341.5 272.0C341.5 268.8 342.6 266.0 343.5 265.0C344.4 264.0 346.5 268.2 347.0 266.0C347.5 263.8 346.1 256.5 346.5 252.0C346.9 247.5 347.8 243.0 349.5 239.0C351.2 235.0 354.0 231.0 357.0 228.0C360.0 225.0 363.8 222.5 367.5 221.0C371.2 219.5 375.4 219.0 379.5 219.0Z" fill="url(#gHead)"/>
<g filter="url(#b1)">
<ellipse cx="365" cy="270.500" rx="6.500" ry="3.200" fill="#d9d9d9" opacity=".9"/><ellipse cx="392.500" cy="270" rx="6.500" ry="3.200" fill="#d9d9d9" opacity=".9"/>
<path d="M372 309 q8 6 16 0 q-2 8 -8 8.500 q-6 -.5 -8 -8.500z" fill="#d6d6d6" opacity=".8"/>
<ellipse cx="380" cy="240" rx="20" ry="14" fill="#ffffff" opacity=".7"/>
</g>
<g filter="url(#b05)" opacity=".8"><path d="M359 270.500 q6 -3 12 .5" stroke="#bcbcbc" stroke-width="1.200" fill="none"/><path d="M386.500 270.500 q6 -3.500 12 -.5" stroke="#bcbcbc" stroke-width="1.200" fill="none"/><path d="M376.500 275 L374.500 288 q4.500 3 9 0 L382 275" stroke="#dcdcdc" stroke-width="1" fill="none"/><path d="M375 290 q4 2 8 0" stroke="#b4b4b4" stroke-width="1.100" fill="none"/><path d="M370 299.500 q9 -2.500 18 0" stroke="#b9b9b9" stroke-width="1.400" fill="none"/><path d="M372.500 303 q6.500 3 13 0" stroke="#cdcdcd" stroke-width="1.200" fill="none"/><path d="M345.500 270 q-1 8 2.500 15M415 270 q1 8 -2.500 15" stroke="#c6c6c6" stroke-width="1" fill="none"/></g>
<path d="M349.0 313.0C350.6 310.6 354.7 307.1 356.0 307.0C357.3 306.9 360.6 310.8 362.0 312.0C363.4 313.2 368.4 317.8 370.0 319.0C371.6 320.2 377.0 321.4 378.0 324.0C379.0 326.6 382.6 342.4 380.0 345.0C377.4 347.6 357.0 350.0 352.0 350.0C347.0 350.0 334.0 346.0 330.0 345.0C326.0 344.0 312.5 341.1 312.0 340.0C311.5 338.9 322.2 334.9 325.0 334.0C327.8 333.1 337.6 333.1 340.0 331.0C342.4 328.9 347.4 315.4 349.0 313.0Z" fill="#bfe3f1"/>
<path d="M378.0 324.0C379.2 321.6 389.6 322.0 392.0 321.0C394.4 320.0 399.1 315.1 402.0 314.0C404.9 312.9 418.4 309.8 421.0 310.0C423.6 310.2 427.0 314.0 428.0 316.0C429.0 318.0 429.8 327.8 431.0 330.0C432.2 332.2 438.1 337.0 440.0 338.0C441.9 339.0 448.4 339.3 450.0 340.0C451.6 340.7 457.0 343.8 456.0 345.0C455.0 346.2 445.6 351.3 440.0 352.0C434.4 352.7 406.0 352.7 400.0 352.0C394.0 351.3 382.2 347.8 380.0 345.0C377.8 342.2 376.8 326.4 378.0 324.0Z" fill="#bfe3f1"/>
<path d="M362 313 C368 319 374 322 381 323 L391 321.500" stroke="#2a2a2a" stroke-width="1.300" fill="none" opacity=".8"/>
<path d="M357 308 C364 317 372 323 380 325 L390 323" stroke="#b02a3a" stroke-width=".8" stroke-dasharray="2 1" fill="none"/>
<path d="M380 326 L384 326 L383.5 345 L379.5 345Z" fill="#1cb0e6"/>
<path d="M401 343 q8 1 13 -5 q3 -2 4 -4" stroke="#5a3fc0" stroke-width=".8" fill="none"/>
<path d="M430 420L437.3 438L441 424Z" fill="#dedede"/>
<path d="M313.0 338.3C310.3 338.8 303.7 342.4 301.6 344.6C299.5 346.8 298.6 351.9 297.5 355.0C296.4 358.1 295.4 365.1 293.5 367.7C291.6 370.3 284.3 372.8 283.0 374.7C281.7 376.6 283.5 380.0 284.0 382.0C284.5 384.0 285.2 386.5 286.5 389.7C287.8 392.9 291.5 402.3 293.5 405.8C295.5 409.3 299.0 414.2 301.6 416.2C304.2 418.2 311.3 419.6 313.0 420.8C314.7 422.0 313.4 423.0 314.3 425.5C315.2 428.0 318.0 438.8 320.0 439.3C322.0 439.8 326.7 431.8 329.3 429.0C331.9 426.2 337.1 421.6 339.7 418.5C342.3 415.4 346.5 409.2 349.0 405.8C351.5 402.4 355.5 395.1 358.1 393.0C360.7 390.9 366.7 392.0 368.5 389.7C370.3 387.4 371.2 380.0 371.5 376.0C371.8 372.0 372.6 362.4 370.5 360.0C368.4 357.6 360.1 358.5 356.0 358.0C351.9 357.5 343.4 357.3 340.0 356.0C336.6 354.7 332.8 350.0 330.4 348.0C328.0 346.0 324.3 342.3 322.0 341.0C319.7 339.7 315.7 337.8 313.0 338.3Z" fill="url(#gSleeve)"/>
<path d="M370.5 358.0C371.6 354.8 374.3 349.8 377.0 348.0C379.7 346.2 386.4 344.1 390.5 344.6C394.6 345.1 403.2 349.1 407.8 351.6C412.4 354.1 421.6 362.0 425.1 363.1C428.6 364.2 432.7 361.3 434.4 359.6C436.1 357.9 437.1 352.3 438.0 350.0C438.9 347.7 439.6 343.6 441.3 342.3C443.0 341.0 448.0 339.4 450.5 340.0C453.0 340.6 457.9 344.4 459.8 347.0C461.7 349.6 463.0 355.9 464.4 359.6C465.8 363.3 469.8 370.7 470.1 374.7C470.4 378.7 467.8 385.6 466.7 389.7C465.6 393.8 463.6 401.7 462.0 405.8C460.4 409.9 457.1 418.2 455.0 420.8C452.9 423.4 448.4 425.2 446.0 425.5C443.6 425.8 439.5 424.1 436.7 423.0C433.9 421.9 429.7 419.2 425.1 417.4C420.5 415.6 408.1 411.8 402.0 409.3C395.9 406.8 383.3 401.5 379.0 399.0C374.7 396.5 371.1 394.4 369.7 390.8C368.3 387.2 368.4 376.4 368.5 372.0C368.6 367.6 369.4 361.2 370.5 358.0Z" fill="url(#gSleeve)"/>
<g filter="url(#b1)" opacity=".8">
<path d="M296 372 C310 360 330 362 350 372 C336 370 314 372 300 384Z" fill="#c9c9c9"/>
<path d="M292 396 C310 404 330 400 352 386 C334 404 312 412 298 408Z" fill="#cfcfcf"/>
<path d="M380 360 C400 372 420 376 446 372 C424 384 398 382 378 372Z" fill="#d0d0d0"/>
<path d="M392 398 C412 408 432 414 452 414 L450 422 C430 420 410 414 390 404Z" fill="#c6c6c6"/>
<path d="M440 348 C452 352 462 366 464 384 C456 370 448 360 438 356Z" fill="#ffffff"/>
<path d="M304 344 C320 344 340 352 356 360 C340 358 320 354 302 352Z" fill="#ffffff"/>
</g>
<g filter="url(#b05)" fill="none" stroke="#c4c6c9" stroke-width="1.100" opacity=".8"><path d="M300 358Q322 362 342 374T368 382"/><path d="M290 384Q312 394 336 392T362 390"/><path d="M304 411Q322 410 338 404T354 396"/><path d="M378 364Q396 376 416 380T448 378"/><path d="M384 386Q404 398 426 402T456 400"/><path d="M442 349Q454 362 460 378T462 398"/><path d="M296 372Q300 390 310 404"/><path d="M398 352Q412 360 424 372"/></g>
<g stroke="#f3f3f3" stroke-linecap="round" fill="none">
<path d="M328.500 293.500Q336 304 347 320" stroke-width="5.200"/><path d="M317.500 297Q329 303 341 313.500" stroke-width="4.800"/><path d="M311.500 314.500Q324 312 337 316" stroke-width="4.500"/><path d="M320 325Q330 325 339 321" stroke-width="4.200"/>
<path d="M412 305L430.500 308.500" stroke-width="4.600"/><path d="M416 309.500L425 319" stroke-width="4.400"/><path d="M421 316L425 331" stroke-width="4.200"/><path d="M401 313L410 305.500" stroke-width="4.400"/>
</g>
<path d="M338.0 308.0C339.5 307.3 344.7 309.7 347.0 312.0C349.3 314.3 355.3 325.0 358.0 328.0C360.7 331.0 367.7 335.9 370.0 338.0C372.3 340.1 377.3 343.9 378.0 346.0C378.7 348.1 376.7 354.2 376.0 356.0C375.3 357.8 374.2 360.6 372.0 361.0C369.8 361.4 360.7 359.9 357.0 359.5C353.3 359.1 342.5 358.9 340.0 358.0C337.5 357.1 335.5 353.6 335.5 352.0C335.5 350.4 339.9 346.4 340.0 344.0C340.1 341.6 336.7 334.0 336.0 331.0C335.3 328.0 333.8 320.7 334.0 318.0C334.2 315.3 336.5 308.7 338.0 308.0Z" fill="#f3f3f3"/>
<path d="M379.7 345.0C379.3 343.4 383.8 338.0 385.0 336.0C386.2 334.0 388.9 330.2 390.1 328.2C391.3 326.2 393.8 321.0 395.0 319.0C396.2 317.0 399.1 312.5 400.5 310.9C401.9 309.3 405.2 305.9 407.0 305.0C408.8 304.1 414.2 302.6 416.0 303.0C417.8 303.4 421.1 306.0 422.0 308.0C422.9 310.0 423.8 317.1 424.0 320.0C424.2 322.9 424.6 330.9 424.0 333.0C423.4 335.1 420.5 336.9 419.0 338.0C417.5 339.1 412.8 341.7 411.0 342.5C409.2 343.3 405.8 344.4 404.0 345.0C402.2 345.6 397.9 347.0 396.0 347.5C394.1 348.0 389.9 349.8 388.0 349.5C386.1 349.2 380.1 346.6 379.7 345.0Z" fill="#f3f3f3"/>
<g filter="url(#b05)" opacity=".75"><path d="M340 338 C346 347 356 352 372 354 L374 359 C356 358.500 344 353 337 345Z" fill="#cdcdcd"/><path d="M392 331 C398 337 408 339 420 335 L416 341 C404 345 396 343 388 339Z" fill="#d2d2d2"/><path d="M346 318 C352 326 360 332 370 338 L368 342 C358 338 350 330 344 322Z" fill="#dcdcdc"/><path d="M318 298l20 14M313 316l22-1M322 326l15-4M404 312l8-5M418 312l6 7M423 318l2 11" stroke="#d4d4d4" stroke-width="1" fill="none"/></g>

</svg>
<div class="abs" style="left:11px;top:11px;width:25px;height:25px;background:rgba(255,255,255,.035);border:1px solid rgba(255,255,255,.22)"></div>
<div class="abs" style="left:11px;top:49px;width:25px;height:25px;background:rgba(255,255,255,.035);border:1px solid rgba(255,255,255,.22)"></div>
<div class="abs" style="left:11px;top:78px;width:25px;height:25px;background:rgba(255,255,255,.035);border:1px solid rgba(255,255,255,.22)"></div>
<div class="abs" style="left:11px;top:107px;width:25px;height:25px;background:rgba(255,255,255,.035);border:1px solid rgba(255,255,255,.22)"></div>
<div class="abs" style="left:11px;top:136px;width:25px;height:25px;background:rgba(255,255,255,.035);border:1px solid rgba(255,255,255,.22)"></div>
<div class="abs" style="left:11px;top:165px;width:25px;height:25px;background:rgba(255,255,255,.035);border:1px solid rgba(255,255,255,.22)"></div>
<div class="abs" style="left:11px;top:194px;width:25px;height:25px;background:rgba(255,255,255,.035);border:1px solid rgba(255,255,255,.22)"></div>
<div class="abs" style="left:11px;top:223px;width:25px;height:25px;background:rgba(255,255,255,.035);border:1px solid rgba(255,255,255,.22)"></div>
<svg class="abs" style="left:-37px;top:-128px" width="120" height="400" viewBox="0 0 120 400">
<path d="M56 147l8-4.500l8 4v9l-8 4.500l-8-4z" fill="#a9a9a9"/><path d="M56 147l8 4v9.500l-8-4z" fill="#8a8a8a"/><path d="M56 147l8-4.500l8 4l-8 4.500z" fill="#d0d0d0"/><path d="M50 154h11v8H50z" fill="#777"/><path d="M52 154l1.500-3h2l-1.500 3zM56 154l1.500-3h2l-1.500 3z" fill="#eee"/><ellipse cx="67" cy="160.500" rx="5" ry="1.500" fill="#1a1a1a" opacity=".8"/>
<path transform="translate(52.5 180) scale(.95)" d="M0 4.500L5 1.200Q8.500 4.300 12 1.200L17 4.500L19.500 9L16 11L15 9.800V18H2V9.800L1 11L-2.500 9Z" fill="#ececec"/><g transform="translate(49.5 195)"><path d="M0 3Q4.500 -1.500 9 3Q4.500 6.500 0 3Z" fill="#ddd" stroke="#111" stroke-width=".9"/><circle cx="4.500" cy="3" r="1.800" fill="#111"/></g>
<circle cx="67" cy="222" r="2.6" fill="#f7a800"/>
<circle cx="64.5" cy="216" r="2.2" fill="#f7a800"/>
<circle cx="59.5" cy="214.5" r="1.9" fill="#f7a800"/>
<circle cx="54.5" cy="217.5" r="1.8" fill="#f7a800"/>
<circle cx="53" cy="222.5" r="2" fill="#f7a800"/>
<circle cx="59" cy="226.5" r="3.2" fill="#f7a800"/>
<circle cx="52" cy="228.5" r="1.8" fill="#f7a800"/>
<circle cx="61" cy="243" r="4.200" fill="#f1f1f1"/><path d="M53 259v-3q1-5 8-6q7 1 8 6v3z" fill="#e6e6e6"/><g transform="translate(49.5 253.5)"><path d="M0 3Q4.500 -1.500 9 3Q4.500 6.500 0 3Z" fill="#ddd" stroke="#111" stroke-width=".9"/><circle cx="4.500" cy="3" r="1.800" fill="#111"/></g>
<path d="M52 270l3 14h10l3-14z" fill="#eee"/><path d="M55 283l3.500-14q5.500-2 10 0l-2.500 13q-5.500 3-11 1z" fill="#f79a00"/><path d="M56.500 281.500l3-11.500q3-1 5.500-.5l-3 12z" fill="#ffc520"/><path d="M69 284.500l3.500 0l0-3.500z" fill="#999"/>
<path d="M53 301q6-4 15-3.500l-1 12q-6 3-10 3z" fill="#8d8d8d"/><path d="M56 302q5-3 11-2.500l-1 9q-5 2.500-7 2.500z" fill="#c4c4c4"/>
<circle cx="60.500" cy="332" r="6" fill="#f6b98d"/><path d="M51 346.500q1-5.500 6.500-6.500v-3h6v3q5.500 1 6.500 6.500z" fill="#f6b98d"/><path d="M69 346.500l3.500 0l0-3.500z" fill="#999"/>
<circle cx="61" cy="362" r="7.500" fill="#f7a000"/><path d="M53.500 362h15M61 354.500v15M55 357.500q6 3 12 0M55 366.500q6-3 12 0M61 354.500q-5.500 7.500 0 15M61 354.500q5.500 7.500 0 15" stroke="#7a4a00" stroke-width=".7" fill="none"/><g transform="translate(49.5 369)"><path d="M0 3Q4.500 -1.500 9 3Q4.500 6.500 0 3Z" fill="#ddd" stroke="#111" stroke-width=".9"/><circle cx="4.500" cy="3" r="1.800" fill="#111"/></g>
</svg>
</div>

<!-- 2D VIEW -->
<div id="v2d">
<svg class="abs" style="left:-770px;top:-128px" width="1920" height="1039" viewBox="0 0 1920 1039">
<defs><pattern id="grid" x="1170.00" y="752.00" width="11.81" height="11.81" patternUnits="userSpaceOnUse"><path d="M0.5 0V11.81 M0 0.5H11.81" stroke="#c1c1c1" stroke-width=".9" fill="none"/></pattern></defs>
<rect x="768" y="126" width="730" height="885" fill="#cbcbcb"/>
<rect x="768" y="126" width="730" height="885" fill="url(#grid)"/>
<path d="M1170.5 126V1011M768 752.5H1498" stroke="#7c7c7c" stroke-width="1" fill="none"/>
<g>
<rect x="770" y="595" width="182.5" height="149.5" fill="#fdfdfd"/>
<clipPath id="tilec"><rect x="770" y="595" width="182.5" height="149.5"/></clipPath>
<g clip-path="url(#tilec)" fill="none">
<rect x="754.3" y="523.2" width="67" height="95.5" stroke="#d9d9d9" stroke-width=".7"/>
<path d="M759.3 526.2 l18 0 l4 22 q-6 4 -10 5 l8 66 l-22 0 l1 -70 q-2 -14 1 -23z" stroke="#cacaca" stroke-width=".6"/>
<path d="M795.3 525.2 l20 1 l2 24 l-5 66 l-22 0 l-6 -64 q8 -2 10 -5z" stroke="#cacaca" stroke-width=".6"/>
<path d="M768.3 527.2v88M803.3 527.2v88" stroke="#f6d3cd" stroke-width=".5"/>
<rect x="789.8" y="525.7" width="3.2" height="3.2" fill="#d9482b" stroke="none"/>
<path d="M781.3 526.7h7M780.8 528.7h8M768.3 544.7h7M801.8 546.7h8" stroke="#8d8d8d" stroke-width=".7"/>
<rect x="754.3" y="622.2" width="67" height="95.5" stroke="#d9d9d9" stroke-width=".7"/>
<path d="M759.3 625.2 l18 0 l4 22 q-6 4 -10 5 l8 66 l-22 0 l1 -70 q-2 -14 1 -23z" stroke="#cacaca" stroke-width=".6"/>
<path d="M795.3 624.2 l20 1 l2 24 l-5 66 l-22 0 l-6 -64 q8 -2 10 -5z" stroke="#cacaca" stroke-width=".6"/>
<path d="M768.3 626.2v88M803.3 626.2v88" stroke="#f6d3cd" stroke-width=".5"/>
<rect x="789.8" y="624.7" width="3.2" height="3.2" fill="#d9482b" stroke="none"/>
<path d="M781.3 625.7h7M780.8 627.7h8M768.3 643.7h7M801.8 645.7h8" stroke="#8d8d8d" stroke-width=".7"/>
<rect x="754.3" y="721.2" width="67" height="95.5" stroke="#d9d9d9" stroke-width=".7"/>
<path d="M759.3 724.2 l18 0 l4 22 q-6 4 -10 5 l8 66 l-22 0 l1 -70 q-2 -14 1 -23z" stroke="#cacaca" stroke-width=".6"/>
<path d="M795.3 723.2 l20 1 l2 24 l-5 66 l-22 0 l-6 -64 q8 -2 10 -5z" stroke="#cacaca" stroke-width=".6"/>
<path d="M768.3 725.2v88M803.3 725.2v88" stroke="#f6d3cd" stroke-width=".5"/>
<rect x="789.8" y="723.7" width="3.2" height="3.2" fill="#d9482b" stroke="none"/>
<path d="M781.3 724.7h7M780.8 726.7h8M768.3 742.7h7M801.8 744.7h8" stroke="#8d8d8d" stroke-width=".7"/>
<rect x="754.3" y="820.2" width="67" height="95.5" stroke="#d9d9d9" stroke-width=".7"/>
<path d="M759.3 823.2 l18 0 l4 22 q-6 4 -10 5 l8 66 l-22 0 l1 -70 q-2 -14 1 -23z" stroke="#cacaca" stroke-width=".6"/>
<path d="M795.3 822.2 l20 1 l2 24 l-5 66 l-22 0 l-6 -64 q8 -2 10 -5z" stroke="#cacaca" stroke-width=".6"/>
<path d="M768.3 824.2v88M803.3 824.2v88" stroke="#f6d3cd" stroke-width=".5"/>
<rect x="789.8" y="822.7" width="3.2" height="3.2" fill="#d9482b" stroke="none"/>
<path d="M781.3 823.7h7M780.8 825.7h8M768.3 841.7h7M801.8 843.7h8" stroke="#8d8d8d" stroke-width=".7"/>
<rect x="825.3" y="523.2" width="67" height="95.5" stroke="#d9d9d9" stroke-width=".7"/>
<path d="M830.3 526.2 l18 0 l4 22 q-6 4 -10 5 l8 66 l-22 0 l1 -70 q-2 -14 1 -23z" stroke="#cacaca" stroke-width=".6"/>
<path d="M866.3 525.2 l20 1 l2 24 l-5 66 l-22 0 l-6 -64 q8 -2 10 -5z" stroke="#cacaca" stroke-width=".6"/>
<path d="M839.3 527.2v88M874.3 527.2v88" stroke="#f6d3cd" stroke-width=".5"/>
<rect x="860.8" y="525.7" width="3.2" height="3.2" fill="#d9482b" stroke="none"/>
<path d="M852.3 526.7h7M851.8 528.7h8M839.3 544.7h7M872.8 546.7h8" stroke="#8d8d8d" stroke-width=".7"/>
<rect x="825.3" y="622.2" width="67" height="95.5" stroke="#d9d9d9" stroke-width=".7"/>
<path d="M830.3 625.2 l18 0 l4 22 q-6 4 -10 5 l8 66 l-22 0 l1 -70 q-2 -14 1 -23z" stroke="#cacaca" stroke-width=".6"/>
<path d="M866.3 624.2 l20 1 l2 24 l-5 66 l-22 0 l-6 -64 q8 -2 10 -5z" stroke="#cacaca" stroke-width=".6"/>
<path d="M839.3 626.2v88M874.3 626.2v88" stroke="#f6d3cd" stroke-width=".5"/>
<rect x="860.8" y="624.7" width="3.2" height="3.2" fill="#d9482b" stroke="none"/>
<path d="M852.3 625.7h7M851.8 627.7h8M839.3 643.7h7M872.8 645.7h8" stroke="#8d8d8d" stroke-width=".7"/>
<rect x="825.3" y="721.2" width="67" height="95.5" stroke="#d9d9d9" stroke-width=".7"/>
<path d="M830.3 724.2 l18 0 l4 22 q-6 4 -10 5 l8 66 l-22 0 l1 -70 q-2 -14 1 -23z" stroke="#cacaca" stroke-width=".6"/>
<path d="M866.3 723.2 l20 1 l2 24 l-5 66 l-22 0 l-6 -64 q8 -2 10 -5z" stroke="#cacaca" stroke-width=".6"/>
<path d="M839.3 725.2v88M874.3 725.2v88" stroke="#f6d3cd" stroke-width=".5"/>
<rect x="860.8" y="723.7" width="3.2" height="3.2" fill="#d9482b" stroke="none"/>
<path d="M852.3 724.7h7M851.8 726.7h8M839.3 742.7h7M872.8 744.7h8" stroke="#8d8d8d" stroke-width=".7"/>
<rect x="825.3" y="820.2" width="67" height="95.5" stroke="#d9d9d9" stroke-width=".7"/>
<path d="M830.3 823.2 l18 0 l4 22 q-6 4 -10 5 l8 66 l-22 0 l1 -70 q-2 -14 1 -23z" stroke="#cacaca" stroke-width=".6"/>
<path d="M866.3 822.2 l20 1 l2 24 l-5 66 l-22 0 l-6 -64 q8 -2 10 -5z" stroke="#cacaca" stroke-width=".6"/>
<path d="M839.3 824.2v88M874.3 824.2v88" stroke="#f6d3cd" stroke-width=".5"/>
<rect x="860.8" y="822.7" width="3.2" height="3.2" fill="#d9482b" stroke="none"/>
<path d="M852.3 823.7h7M851.8 825.7h8M839.3 841.7h7M872.8 843.7h8" stroke="#8d8d8d" stroke-width=".7"/>
<rect x="896.3" y="523.2" width="67" height="95.5" stroke="#d9d9d9" stroke-width=".7"/>
<path d="M901.3 526.2 l18 0 l4 22 q-6 4 -10 5 l8 66 l-22 0 l1 -70 q-2 -14 1 -23z" stroke="#cacaca" stroke-width=".6"/>
<path d="M937.3 525.2 l20 1 l2 24 l-5 66 l-22 0 l-6 -64 q8 -2 10 -5z" stroke="#cacaca" stroke-width=".6"/>
<path d="M910.3 527.2v88M945.3 527.2v88" stroke="#f6d3cd" stroke-width=".5"/>
<rect x="931.8" y="525.7" width="3.2" height="3.2" fill="#d9482b" stroke="none"/>
<path d="M923.3 526.7h7M922.8 528.7h8M910.3 544.7h7M943.8 546.7h8" stroke="#8d8d8d" stroke-width=".7"/>
<rect x="896.3" y="622.2" width="67" height="95.5" stroke="#d9d9d9" stroke-width=".7"/>
<path d="M901.3 625.2 l18 0 l4 22 q-6 4 -10 5 l8 66 l-22 0 l1 -70 q-2 -14 1 -23z" stroke="#cacaca" stroke-width=".6"/>
<path d="M937.3 624.2 l20 1 l2 24 l-5 66 l-22 0 l-6 -64 q8 -2 10 -5z" stroke="#cacaca" stroke-width=".6"/>
<path d="M910.3 626.2v88M945.3 626.2v88" stroke="#f6d3cd" stroke-width=".5"/>
<rect x="931.8" y="624.7" width="3.2" height="3.2" fill="#d9482b" stroke="none"/>
<path d="M923.3 625.7h7M922.8 627.7h8M910.3 643.7h7M943.8 645.7h8" stroke="#8d8d8d" stroke-width=".7"/>
<rect x="896.3" y="721.2" width="67" height="95.5" stroke="#d9d9d9" stroke-width=".7"/>
<path d="M901.3 724.2 l18 0 l4 22 q-6 4 -10 5 l8 66 l-22 0 l1 -70 q-2 -14 1 -23z" stroke="#cacaca" stroke-width=".6"/>
<path d="M937.3 723.2 l20 1 l2 24 l-5 66 l-22 0 l-6 -64 q8 -2 10 -5z" stroke="#cacaca" stroke-width=".6"/>
<path d="M910.3 725.2v88M945.3 725.2v88" stroke="#f6d3cd" stroke-width=".5"/>
<rect x="931.8" y="723.7" width="3.2" height="3.2" fill="#d9482b" stroke="none"/>
<path d="M923.3 724.7h7M922.8 726.7h8M910.3 742.7h7M943.8 744.7h8" stroke="#8d8d8d" stroke-width=".7"/>
<rect x="896.3" y="820.2" width="67" height="95.5" stroke="#d9d9d9" stroke-width=".7"/>
<path d="M901.3 823.2 l18 0 l4 22 q-6 4 -10 5 l8 66 l-22 0 l1 -70 q-2 -14 1 -23z" stroke="#cacaca" stroke-width=".6"/>
<path d="M937.3 822.2 l20 1 l2 24 l-5 66 l-22 0 l-6 -64 q8 -2 10 -5z" stroke="#cacaca" stroke-width=".6"/>
<path d="M910.3 824.2v88M945.3 824.2v88" stroke="#f6d3cd" stroke-width=".5"/>
<rect x="931.8" y="822.7" width="3.2" height="3.2" fill="#d9482b" stroke="none"/>
<path d="M923.3 823.7h7M922.8 825.7h8M910.3 841.7h7M943.8 843.7h8" stroke="#8d8d8d" stroke-width=".7"/>
<rect x="967.3" y="523.2" width="67" height="95.5" stroke="#d9d9d9" stroke-width=".7"/>
<path d="M972.3 526.2 l18 0 l4 22 q-6 4 -10 5 l8 66 l-22 0 l1 -70 q-2 -14 1 -23z" stroke="#cacaca" stroke-width=".6"/>
<path d="M1008.3 525.2 l20 1 l2 24 l-5 66 l-22 0 l-6 -64 q8 -2 10 -5z" stroke="#cacaca" stroke-width=".6"/>
<path d="M981.3 527.2v88M1016.3 527.2v88" stroke="#f6d3cd" stroke-width=".5"/>
<rect x="1002.8" y="525.7" width="3.2" height="3.2" fill="#d9482b" stroke="none"/>
<path d="M994.3 526.7h7M993.8 528.7h8M981.3 544.7h7M1014.8 546.7h8" stroke="#8d8d8d" stroke-width=".7"/>
<rect x="967.3" y="622.2" width="67" height="95.5" stroke="#d9d9d9" stroke-width=".7"/>
<path d="M972.3 625.2 l18 0 l4 22 q-6 4 -10 5 l8 66 l-22 0 l1 -70 q-2 -14 1 -23z" stroke="#cacaca" stroke-width=".6"/>
<path d="M1008.3 624.2 l20 1 l2 24 l-5 66 l-22 0 l-6 -64 q8 -2 10 -5z" stroke="#cacaca" stroke-width=".6"/>
<path d="M981.3 626.2v88M1016.3 626.2v88" stroke="#f6d3cd" stroke-width=".5"/>
<rect x="1002.8" y="624.7" width="3.2" height="3.2" fill="#d9482b" stroke="none"/>
<path d="M994.3 625.7h7M993.8 627.7h8M981.3 643.7h7M1014.8 645.7h8" stroke="#8d8d8d" stroke-width=".7"/>
<rect x="967.3" y="721.2" width="67" height="95.5" stroke="#d9d9d9" stroke-width=".7"/>
<path d="M972.3 724.2 l18 0 l4 22 q-6 4 -10 5 l8 66 l-22 0 l1 -70 q-2 -14 1 -23z" stroke="#cacaca" stroke-width=".6"/>
<path d="M1008.3 723.2 l20 1 l2 24 l-5 66 l-22 0 l-6 -64 q8 -2 10 -5z" stroke="#cacaca" stroke-width=".6"/>
<path d="M981.3 725.2v88M1016.3 725.2v88" stroke="#f6d3cd" stroke-width=".5"/>
<rect x="1002.8" y="723.7" width="3.2" height="3.2" fill="#d9482b" stroke="none"/>
<path d="M994.3 724.7h7M993.8 726.7h8M981.3 742.7h7M1014.8 744.7h8" stroke="#8d8d8d" stroke-width=".7"/>
<rect x="967.3" y="820.2" width="67" height="95.5" stroke="#d9d9d9" stroke-width=".7"/>
<path d="M972.3 823.2 l18 0 l4 22 q-6 4 -10 5 l8 66 l-22 0 l1 -70 q-2 -14 1 -23z" stroke="#cacaca" stroke-width=".6"/>
<path d="M1008.3 822.2 l20 1 l2 24 l-5 66 l-22 0 l-6 -64 q8 -2 10 -5z" stroke="#cacaca" stroke-width=".6"/>
<path d="M981.3 824.2v88M1016.3 824.2v88" stroke="#f6d3cd" stroke-width=".5"/>
<rect x="1002.8" y="822.7" width="3.2" height="3.2" fill="#d9482b" stroke="none"/>
<path d="M994.3 823.7h7M993.8 825.7h8M981.3 841.7h7M1014.8 843.7h8" stroke="#8d8d8d" stroke-width=".7"/>
</g>
<rect x="770" y="595" width="182.5" height="149.5" fill="none" stroke="#222" stroke-width="1"/>
<rect x="768.8" y="593.8" width="2.400" height="2.400" fill="#222"/>
<rect x="951.3" y="593.8" width="2.400" height="2.400" fill="#222"/>
<rect x="768.8" y="743.3" width="2.400" height="2.400" fill="#222"/>
<rect x="951.3" y="743.3" width="2.400" height="2.400" fill="#222"/>
</g>
<g>
<rect x="1119.5" y="344.5" width="203" height="155" fill="#dadada" fill-opacity=".75"/>
<g fill="none" stroke="#b4b4b4" stroke-width=".7">
<path d="M1128 428 v-32 q6 -3 5 -12 l10 -3 q1 5 5 7 l6 2 l-2 38z"/>
<path d="M1189 428 v-42 l2 5 q5 3 11 3 l-4 34z"/>
<path d="M1143 363 l10 -9 l9 12 l-3 7 l-8 2z"/>
<path d="M1173 358 l8 -3 l14 18 l-5 4z"/>
<path d="M1127 487 v-30 q5 -4 5 -12 l9 -2 q2 3 6 4 l1 40z"/>
<path d="M1167 487 v-32 q5 -3 5 -10 l8 -2 q9 6 18 0 l7 2 q0 7 5 10 v32z M1188 447v40"/>
<path d="M1246 427 v-22 q6 -6 7 -18 l3 -2 q8 10 16 4 l-4 38z M1256 376 l6 -4 l12 17 l-4 3"/>
<path d="M1288 427 v-20 q5 -5 7 -14 l14 14 l3 -2 l1 22z M1295 377 l5 -2 l12 32"/>
<path d="M1248 486 v-27 q9 -4 11 -14 l5 0 v41z"/>
<path d="M1283 486 v-28 q8 -4 11 -12 q5 -3 9 0 q3 8 11 12 v28z M1298 445v41"/>
</g>
<g font-family="'Liberation Sans',sans-serif" font-size="3" fill="#777" opacity=".8">
<text x="1157" y="356">SLEEVE</text>
<text x="1257" y="362" font-size="2.8">How to make the collar:</text>
<text x="1134" y="418" transform="rotate(-38 1134 418)">FRONT</text>
<text x="1133" y="477" transform="rotate(-38 1133 477)">BACK</text>
<text x="1251" y="476" transform="rotate(-38 1251 476)" font-size="2.6">SLEEVE</text>
<text x="1189" y="357" fill="#6a6ac8" font-size="2.6">adjust the lenght of</text>
<text x="1189" y="360.5" fill="#6a6ac8" font-size="2.6">the collar piece to</text>
<text x="1189" y="364" fill="#6a6ac8" font-size="2.6">match jacket's collar</text>
<text x="1203" y="409" fill="#c05050" font-size="2.4">turtle neck</text>
<text x="1203" y="412" fill="#c05050" font-size="2.4">height of</text>
<text x="1203" y="415" fill="#c05050" font-size="2.4">the front</text>
<text x="1203" y="418" fill="#c05050" font-size="2.4">part for</text>
<text x="1203" y="421" fill="#c05050" font-size="2.4">the front</text>
<text x="1203" y="424" fill="#c05050" font-size="2.4">collar</text>
<text x="1156" y="420" fill="#c05050" font-size="2.4">1/3cm or where</text>
<text x="1156" y="423" fill="#c05050" font-size="2.4">3 front pieces</text>
<text x="1156" y="426" fill="#c05050" font-size="2.4">overlap</text>
<text x="1121" y="393" fill="#c05050" font-size="2.4">armhole</text>
<text x="1121" y="396" fill="#c05050" font-size="2.4">depth</text>
<text x="1129" y="381" fill="#c05050" font-size="2.4" transform="rotate(-30 1129 381)">shoulder width</text>
<text x="1241" y="379" fill="#6a6ac8" font-size="2.4">seam 2</text>
<text x="1275" y="384" fill="#6a6ac8" font-size="2.4">seam 1</text>
<text x="1152" y="374" fill="#6a6ac8" font-size="3">2</text><text x="1138" y="422" fill="#6a6ac8" font-size="3">1</text><text x="1193" y="422" fill="#6a6ac8" font-size="3">3</text>
</g>
<path d="M1125 392v35M1123 402l8 -14M1152 469h12M1267 467h12M1184 356h3" stroke="#c86060" stroke-width=".6" fill="none"/>
<rect x="1119.5" y="344.5" width="203" height="155" fill="none" stroke="#3a3a3a" stroke-width=".9"/>
<rect x="1118.3" y="343.3" width="2.400" height="2.400" fill="#222"/>
<rect x="1321.3" y="343.3" width="2.400" height="2.400" fill="#222"/>
<rect x="1118.3" y="498.3" width="2.400" height="2.400" fill="#222"/>
<rect x="1321.3" y="498.3" width="2.400" height="2.400" fill="#222"/>
</g>
<rect x="1472.5" y="458.800" width="21" height="21" fill="#fff" stroke="#555" stroke-width=".8"/>
<path d="M1188.4 514 C1178 513.5 1167 515.5 1162.5 523 C1158.5 530 1159.5 541 1163 547 C1165 550 1169 549.5 1172 551 C1176 553 1180 558 1188.4 558.5Z" fill="none" stroke="#a3bcd9" stroke-width="10" stroke-linejoin="miter" stroke-opacity=".92"/>
<path d="M1217.9 514 C1228.3 513.5 1239.3 515.5 1243.8 523 C1247.8 530 1246.8 541 1243.3 547 C1241.3 550 1237.3 549.5 1234.3 551 C1230.3 553 1226.3 558 1217.9 558.5Z" fill="none" stroke="#a3bcd9" stroke-width="10" stroke-linejoin="miter" stroke-opacity=".92"/>
<path d="M1194.4 530.2V558M1213 531.8V558.5" stroke="#a3bcd9" stroke-width="7" stroke-opacity=".9"/>
<path d="M1194.4 536.9H1213M1194.4 545H1213" stroke="#86aede" stroke-width="1.2"/>
<path d="M1139.6 564.2 l2.5 -1.5 q3.5 6 9.5 6.5 l0 3 q-8 -0.5 -12 -8z" fill="none" stroke="#a3bcd9" stroke-width="4.5" stroke-linejoin="miter" stroke-opacity=".92"/>
<path d="M1196.8 564.2 l-2.5 -1.5 q-3.5 6 -9.5 6.5 l0 3 q8 -0.5 12 -8z" fill="none" stroke="#a3bcd9" stroke-width="4.5" stroke-linejoin="miter" stroke-opacity=".92"/>
<path d="M1262.6 569.0 l2.5 -1.5 q3.5 6 9.5 6.5 l0 3 q-8 -0.5 -12 -8z" fill="none" stroke="#a3bcd9" stroke-width="4.5" stroke-linejoin="miter" stroke-opacity=".92"/>
<path d="M1335.6 565.0 l-2.5 -1.5 q-3.5 6 -9.5 6.5 l0 3 q8 -0.5 12 -8z" fill="none" stroke="#a3bcd9" stroke-width="4.5" stroke-linejoin="miter" stroke-opacity=".92"/>
<path d="M1160.7 567.5H1180.9V572.8H1160.7Z" fill="none" stroke="#a3bcd9" stroke-width="8" stroke-linejoin="miter" stroke-opacity=".92"/>
<path d="M1219 566.7H1238.9V572.3H1219Z" fill="none" stroke="#a3bcd9" stroke-width="8" stroke-linejoin="miter" stroke-opacity=".92"/>
<path d="M1196 569.6L1219 568.6" stroke="#86aede" stroke-width="1.2"/>
<path d="M1103.6 581L1140.7 579.300L1140.7 582.400L1103.6 584.300Z" fill="none" stroke="#a3bcd9" stroke-width="4.5" stroke-linejoin="miter" stroke-opacity=".92"/>
<path d="M1195.2 579.300L1231.7 581.200L1231.7 584.400L1194.6 582.400Z" fill="none" stroke="#a3bcd9" stroke-width="4.5" stroke-linejoin="miter" stroke-opacity=".92"/>
<path d="M1243.5 581.200L1275.3 579.300L1275.3 582.400L1243.5 584.400Z" fill="none" stroke="#a3bcd9" stroke-width="4.5" stroke-linejoin="miter" stroke-opacity=".92"/>
<path d="M1330.1 577.400L1362.6 579.300L1362.6 582.300L1330.1 580.600Z" fill="none" stroke="#a3bcd9" stroke-width="4.5" stroke-linejoin="miter" stroke-opacity=".92"/>
<path d="M1228.200 589.8L1232.300 589.8L1225.900 682.1L1221.800 682.1Z" fill="none" stroke="#a3bcd9" stroke-width="4.5" stroke-linejoin="miter" stroke-opacity=".92"/>
<path d="M1159 587 L1164 586 L1164 680 L1158 680Z M1178 586 L1184 587 L1184 680 L1179 680Z" fill="#b5b5b5" opacity=".7"/>
<path d="M1129.8 587.8L1143.6 585L1153.9 587L1157.1 611L1159.5 665L1160.3 679.7C1158.5 686 1157.9 690 1157.9 694L1157.1 756L1127.7 756L1122.1 687.7L1120.5 640L1119.8 623.9C1128 616 1131.5 606 1129.8 587.8Z" fill="none" stroke="#a3bcd9" stroke-width="9.5" stroke-linejoin="miter" stroke-opacity=".92"/>
<path d="M1211.1 587.8L1198.4 585L1188.9 588.2L1185.5 611L1182.5 665L1180.1 679.7C1182.5 686 1183.3 690 1183.3 694L1183.8 756L1213.5 756L1218.2 692.4L1220.6 640L1221.4 623.9C1213 616 1209.5 606 1211.1 587.8Z" fill="none" stroke="#a3bcd9" stroke-width="9.5" stroke-linejoin="miter" stroke-opacity=".92"/>
<path d="M1253.8 592.6L1268.1 589Q1273 591.5 1278.5 592.1L1280.8 627.1L1281.6 640L1282.7 670.2C1283.5 677 1286 681 1291.2 683.7C1289.5 690 1289.1 696 1289.1 703.5L1290 760L1259.4 760L1253.8 687.7L1249.9 640L1247.5 625.5C1254 617 1255.5 607 1253.8 592.6Z" fill="none" stroke="#a3bcd9" stroke-width="9.5" stroke-linejoin="miter" stroke-opacity=".92"/>
<path d="M1349.1 592.1L1334.8 588.2Q1330 591.5 1324.5 592.1L1322.1 627.1L1320.9 640L1319.8 670.2C1319 677 1316.5 680.5 1311 682.9C1312.8 690 1313.4 696 1313.4 703.5L1312.6 759.1L1343.1 759.1L1348.3 703.5L1353.1 640L1354.7 625.5C1348.5 617 1347.3 607 1349.1 592.1Z" fill="none" stroke="#a3bcd9" stroke-width="9.5" stroke-linejoin="miter" stroke-opacity=".92"/>
<path d="M1080 692.9H1121.5M1158 690H1183M1226 690.8H1254M1289.5 686H1312M1348.5 690.5H1398.4M1283 674.5H1319M1160 670H1168.500" stroke="#86aede" stroke-width="1.2" opacity=".8"/>
<rect x="1061" y="688" width="19" height="10" fill="#8fb6e0" opacity=".9"/>
<rect x="1399" y="684.5" width="19" height="10" fill="#8fb6e0" opacity=".9"/>
<rect x="1161.3" y="770.1" width="11.5" height="12" fill="#8fb6e0" opacity=".95"/>
<rect x="1188.3" y="770.1" width="12.3" height="12" fill="#8fb6e0" opacity=".95"/>
<rect x="1161.3" y="783.3" width="12.6" height="12" fill="#8fb6e0" opacity=".95"/>
<rect x="1188.3" y="783.3" width="13.5" height="12" fill="#8fb6e0" opacity=".95"/>
<path d="M1156 776.1H1206M1156 789.3H1207" stroke="#86aede" stroke-width="1.2"/>
<path d="M1188.4 514 C1178 513.5 1167 515.5 1162.5 523 C1158.5 530 1159.5 541 1163 547 C1165 550 1169 549.5 1172 551 C1176 553 1180 558 1188.4 558.5Z" fill="#fff" stroke="#1c1c1c" stroke-width="1" stroke-linejoin="round"/>
<path d="M1217.9 514 C1228.3 513.5 1239.3 515.5 1243.8 523 C1247.8 530 1246.8 541 1243.3 547 C1241.3 550 1237.3 549.5 1234.3 551 C1230.3 553 1226.3 558 1217.9 558.5Z" fill="#fff" stroke="#1c1c1c" stroke-width="1" stroke-linejoin="round"/>
<path d="M1188.4 514V558.5M1217.9 514V558.5" stroke="#8e2323" stroke-width="1.2"/>
<circle cx="1188.4" cy="514.0" r="1.3" fill="#8e2323"/>
<circle cx="1188.4" cy="558.5" r="1.3" fill="#8e2323"/>
<circle cx="1217.9" cy="514.0" r="1.3" fill="#8e2323"/>
<circle cx="1217.9" cy="558.5" r="1.3" fill="#8e2323"/>
<path d="M1194.4 530.2V558M1213 531.8V558.5" stroke="#222" stroke-width="1.3"/>
<circle cx="1194.4" cy="530.2" r="1.3" fill="#222"/>
<circle cx="1194.4" cy="558.0" r="1.3" fill="#222"/>
<circle cx="1213.0" cy="531.8" r="1.3" fill="#222"/>
<circle cx="1213.0" cy="558.5" r="1.3" fill="#222"/>
<path d="M1139.6 564.2 l2.5 -1.5 q3.5 6 9.5 6.5 l0 3 q-8 -0.5 -12 -8z" fill="#1fb4f4" stroke="#1c1c1c" stroke-width="1" stroke-linejoin="round"/>
<path d="M1196.8 564.2 l-2.5 -1.5 q-3.5 6 -9.5 6.5 l0 3 q8 -0.5 12 -8z" fill="#1fb4f4" stroke="#1c1c1c" stroke-width="1" stroke-linejoin="round"/>
<path d="M1262.6 569.0 l2.5 -1.5 q3.5 6 9.5 6.5 l0 3 q-8 -0.5 -12 -8z" fill="#1fb4f4" stroke="#1c1c1c" stroke-width="1" stroke-linejoin="round"/>
<path d="M1335.6 565.0 l-2.5 -1.5 q-3.5 6 -9.5 6.5 l0 3 q8 -0.5 12 -8z" fill="#1fb4f4" stroke="#1c1c1c" stroke-width="1" stroke-linejoin="round"/>
<path d="M1160.7 567.5H1180.9V572.8H1160.7Z" fill="#fff" stroke="#1c1c1c" stroke-width="1" stroke-linejoin="round"/>
<path d="M1219 566.7H1238.9V572.3H1219Z" fill="#fff" stroke="#1c1c1c" stroke-width="1" stroke-linejoin="round"/>
<path d="M1103.6 581L1140.7 579.300L1140.7 582.400L1103.6 584.300Z" fill="#1fb4f4" stroke="#1c1c1c" stroke-width="1" stroke-linejoin="round"/>
<path d="M1195.2 579.300L1231.7 581.200L1231.7 584.400L1194.6 582.400Z" fill="#1fb4f4" stroke="#1c1c1c" stroke-width="1" stroke-linejoin="round"/>
<path d="M1243.5 581.200L1275.3 579.300L1275.3 582.400L1243.5 584.400Z" fill="#1fb4f4" stroke="#1c1c1c" stroke-width="1" stroke-linejoin="round"/>
<path d="M1330.1 577.400L1362.6 579.300L1362.6 582.300L1330.1 580.600Z" fill="#1fb4f4" stroke="#1c1c1c" stroke-width="1" stroke-linejoin="round"/>
<path d="M1228.200 589.8L1232.300 589.8L1225.900 682.1L1221.800 682.1Z" fill="#1fb4f4" stroke="#1c1c1c" stroke-width="1" stroke-linejoin="round"/>
<path d="M1168.7 586.6H1175.4V678.9H1168.7Z" fill="#fff" stroke="#1c1c1c" stroke-width="1" stroke-linejoin="round"/>
<path d="M1129.8 587.8L1143.6 585L1153.9 587L1157.1 611L1159.5 665L1160.3 679.7C1158.5 686 1157.9 690 1157.9 694L1157.1 756L1127.7 756L1122.1 687.7L1120.5 640L1119.8 623.9C1128 616 1131.5 606 1129.8 587.8Z" fill="#fff" stroke="#1c1c1c" stroke-width="1" stroke-linejoin="round"/>
<path d="M1211.1 587.8L1198.4 585L1188.9 588.2L1185.5 611L1182.5 665L1180.1 679.7C1182.5 686 1183.3 690 1183.3 694L1183.8 756L1213.5 756L1218.2 692.4L1220.6 640L1221.4 623.9C1213 616 1209.5 606 1211.1 587.8Z" fill="#fff" stroke="#1c1c1c" stroke-width="1" stroke-linejoin="round"/>
<g stroke="#8e2323" stroke-width=".8" fill="none">
<path d="M1119.8 629L1157.6 627.2M1119.9 633.2L1157.8 631.2"/>
<path d="M1183.2 627.2L1221.3 629M1183 631.2L1221.2 633.2"/>
<path d="M1150 587L1157 679.7M1153 587L1159.8 679.7"/>
<path d="M1191.5 587.5L1184 679.7M1188.5 588L1181 679.7"/>
<path d="M1142.5 585.5Q1144 592 1149.5 593.5M1145.5 585.3Q1147 590 1152 591"/>
<path d="M1199.5 585.5Q1198 592 1192 593.5M1196.5 585.3Q1195 590 1190 591"/>
</g>
<circle cx="1129.8" cy="587.8" r="1.3" fill="#222"/>
<circle cx="1143.6" cy="585.0" r="1.3" fill="#222"/>
<circle cx="1119.8" cy="623.9" r="1.3" fill="#222"/>
<circle cx="1127.7" cy="756.0" r="1.3" fill="#222"/>
<circle cx="1157.1" cy="756.0" r="1.3" fill="#222"/>
<circle cx="1211.1" cy="587.8" r="1.3" fill="#222"/>
<circle cx="1198.4" cy="585.0" r="1.3" fill="#222"/>
<circle cx="1221.4" cy="623.9" r="1.3" fill="#222"/>
<circle cx="1183.8" cy="756.0" r="1.3" fill="#222"/>
<circle cx="1213.5" cy="756.0" r="1.3" fill="#222"/>
<circle cx="1168.7" cy="586.6" r="1.3" fill="#222"/>
<circle cx="1175.4" cy="586.6" r="1.3" fill="#222"/>
<circle cx="1168.7" cy="678.9" r="1.3" fill="#222"/>
<circle cx="1175.4" cy="678.9" r="1.3" fill="#222"/>
<circle cx="1157.0" cy="679.7" r="1.2" fill="#8e2323"/>
<circle cx="1160.3" cy="679.7" r="1.2" fill="#8e2323"/>
<circle cx="1181.0" cy="679.7" r="1.2" fill="#8e2323"/>
<circle cx="1184.0" cy="679.7" r="1.2" fill="#8e2323"/>
<circle cx="1119.8" cy="629.0" r="1.2" fill="#8e2323"/>
<circle cx="1119.9" cy="633.2" r="1.2" fill="#8e2323"/>
<circle cx="1157.6" cy="627.2" r="1.2" fill="#8e2323"/>
<circle cx="1157.8" cy="631.2" r="1.2" fill="#8e2323"/>
<circle cx="1183.2" cy="627.2" r="1.2" fill="#8e2323"/>
<circle cx="1183.0" cy="631.2" r="1.2" fill="#8e2323"/>
<circle cx="1221.3" cy="629.0" r="1.2" fill="#8e2323"/>
<circle cx="1221.2" cy="633.2" r="1.2" fill="#8e2323"/>
<circle cx="1149.5" cy="593.5" r="1.2" fill="#8e2323"/>
<circle cx="1152.0" cy="591.0" r="1.2" fill="#8e2323"/>
<circle cx="1192.0" cy="593.5" r="1.2" fill="#8e2323"/>
<circle cx="1190.0" cy="591.0" r="1.2" fill="#8e2323"/>
<path d="M1253.8 592.6L1268.1 589Q1273 591.5 1278.5 592.1L1280.8 627.1L1281.6 640L1282.7 670.2C1283.5 677 1286 681 1291.2 683.7C1289.5 690 1289.1 696 1289.1 703.5L1290 760L1259.4 760L1253.8 687.7L1249.9 640L1247.5 625.5C1254 617 1255.5 607 1253.8 592.6Z" fill="#fff" stroke="#1c1c1c" stroke-width="1" stroke-linejoin="round"/>
<path d="M1349.1 592.1L1334.8 588.2Q1330 591.5 1324.5 592.1L1322.1 627.1L1320.9 640L1319.8 670.2C1319 677 1316.5 680.5 1311 682.9C1312.8 690 1313.4 696 1313.4 703.5L1312.6 759.1L1343.1 759.1L1348.3 703.5L1353.1 640L1354.7 625.5C1348.5 617 1347.3 607 1349.1 592.1Z" fill="#fff" stroke="#1c1c1c" stroke-width="1" stroke-linejoin="round"/>
<g stroke="#8e2323" stroke-width=".8" fill="none">
<path d="M1248.5 632L1281.3 631M1248.8 636L1281.5 634.5M1321.8 630L1354 631.5M1321.6 633.8L1353.8 635.5"/>
<path d="M1267 589.5Q1269 595 1278.7 596.5M1270 589.3Q1272 593 1278.6 594"/>
<path d="M1336 588.7Q1334 594.5 1324.3 596M1333 588.7Q1331 592.5 1324.4 593.5"/>
</g>
<circle cx="1253.8" cy="592.6" r="1.3" fill="#222"/>
<circle cx="1268.1" cy="589.0" r="1.3" fill="#222"/>
<circle cx="1278.5" cy="592.1" r="1.3" fill="#222"/>
<circle cx="1247.5" cy="625.5" r="1.3" fill="#222"/>
<circle cx="1259.4" cy="760.0" r="1.3" fill="#222"/>
<circle cx="1290.0" cy="760.0" r="1.3" fill="#222"/>
<circle cx="1291.2" cy="683.7" r="1.3" fill="#222"/>
<circle cx="1282.7" cy="670.2" r="1.3" fill="#222"/>
<circle cx="1349.1" cy="592.1" r="1.3" fill="#222"/>
<circle cx="1334.8" cy="588.2" r="1.3" fill="#222"/>
<circle cx="1324.5" cy="592.1" r="1.3" fill="#222"/>
<circle cx="1354.7" cy="625.5" r="1.3" fill="#222"/>
<circle cx="1312.6" cy="759.1" r="1.3" fill="#222"/>
<circle cx="1343.1" cy="759.1" r="1.3" fill="#222"/>
<circle cx="1311.0" cy="682.9" r="1.3" fill="#222"/>
<circle cx="1319.8" cy="670.2" r="1.3" fill="#222"/>
<circle cx="1248.5" cy="632.0" r="1.2" fill="#8e2323"/>
<circle cx="1248.8" cy="636.0" r="1.2" fill="#8e2323"/>
<circle cx="1281.3" cy="631.0" r="1.2" fill="#8e2323"/>
<circle cx="1281.5" cy="634.5" r="1.2" fill="#8e2323"/>
<circle cx="1321.8" cy="630.0" r="1.2" fill="#8e2323"/>
<circle cx="1321.6" cy="633.8" r="1.2" fill="#8e2323"/>
<circle cx="1354.0" cy="631.5" r="1.2" fill="#8e2323"/>
<circle cx="1353.8" cy="635.5" r="1.2" fill="#8e2323"/>
<circle cx="1278.7" cy="596.5" r="1.2" fill="#8e2323"/>
<circle cx="1278.6" cy="594.0" r="1.2" fill="#8e2323"/>
<circle cx="1324.3" cy="596.0" r="1.2" fill="#8e2323"/>
<circle cx="1324.4" cy="593.5" r="1.2" fill="#8e2323"/>
<path d="M1043.5 637.9C1052 637.5 1058.6 635 1066.5 627.1C1070 623.5 1073 622.8 1075.3 622.8C1077.5 622.8 1080.5 623.5 1084 627.1C1092 635 1098 636.5 1106.7 636.9C1104.5 650 1103.2 668 1103.1 684.8L1049.1 684.8C1049 668 1046.5 650 1043.5 637.9Z" fill="#fff" stroke="#1c1c1c" stroke-width="1" stroke-linejoin="round"/>
<path d="M1373 636.9C1381.5 636.5 1388 634.5 1396 626.6C1399.5 623 1402.5 622.3 1404.7 622.3C1407 622.3 1410 623 1413.5 626.6C1421.5 634.5 1427.5 636 1436 636.9C1433 650 1430.4 668 1430.2 684.2L1376.5 684.2C1376.3 668 1375 650 1373 636.9Z" fill="#fff" stroke="#1c1c1c" stroke-width="1" stroke-linejoin="round"/>
<circle cx="1043.5" cy="637.9" r="1.3" fill="#222"/>
<circle cx="1075.3" cy="622.8" r="1.3" fill="#222"/>
<circle cx="1106.7" cy="636.9" r="1.3" fill="#222"/>
<circle cx="1049.1" cy="684.8" r="1.3" fill="#222"/>
<circle cx="1103.1" cy="684.8" r="1.3" fill="#222"/>
<circle cx="1373.0" cy="636.9" r="1.3" fill="#222"/>
<circle cx="1404.7" cy="622.3" r="1.3" fill="#222"/>
<circle cx="1436.0" cy="636.9" r="1.3" fill="#222"/>
<circle cx="1376.5" cy="684.2" r="1.3" fill="#222"/>
<circle cx="1430.2" cy="684.2" r="1.3" fill="#222"/>
<path d="M1060.5 692.9H1080M1398.4 689.2H1417.5" stroke="#333" stroke-width="1.8"/>
<circle cx="1060.5" cy="692.9" r="1.5" fill="#222"/>
<circle cx="1080.0" cy="692.9" r="1.5" fill="#222"/>
<circle cx="1398.4" cy="689.2" r="1.5" fill="#222"/>
<circle cx="1417.5" cy="689.2" r="1.5" fill="#222"/>
<rect x="1160.3" y="774.8" width="13.5" height="2.6" fill="#fff" stroke="#2a2a2a" stroke-width="1"/>
<circle cx="1160.3" cy="776.1" r="1.6" fill="#222"/>
<circle cx="1173.8" cy="776.1" r="1.6" fill="#222"/>
<rect x="1187.3" y="774.8" width="14.3" height="2.6" fill="#fff" stroke="#2a2a2a" stroke-width="1"/>
<circle cx="1187.3" cy="776.1" r="1.6" fill="#222"/>
<circle cx="1201.6" cy="776.1" r="1.6" fill="#222"/>
<rect x="1160.3" y="788.0" width="14.6" height="2.6" fill="#fff" stroke="#2a2a2a" stroke-width="1"/>
<circle cx="1160.3" cy="789.3" r="1.6" fill="#222"/>
<circle cx="1174.9" cy="789.3" r="1.6" fill="#222"/>
<rect x="1187.3" y="788.0" width="15.5" height="2.6" fill="#fff" stroke="#2a2a2a" stroke-width="1"/>
<circle cx="1187.3" cy="789.3" r="1.6" fill="#222"/>
<circle cx="1202.8" cy="789.3" r="1.6" fill="#222"/>
</svg>
<div class="abs" style="left:11px;top:11px;width:25px;height:25px;background:#d6d6d6;border:1px solid #b4b4b4"></div>
<div class="abs" style="left:11px;top:40px;width:25px;height:25px;background:#d6d6d6;border:1px solid #b4b4b4"></div>
<div class="abs" style="left:11px;top:69px;width:25px;height:25px;background:#d6d6d6;border:1px solid #b4b4b4"></div>
<div class="abs" style="left:11px;top:98px;width:25px;height:25px;background:#c4c4c4;border:1px solid #b4b4b4"></div>
<div class="abs" style="left:11px;top:127px;width:25px;height:25px;background:#d6d6d6;border:1px solid #b4b4b4"></div>
<svg class="abs" style="left:-770px;top:-128px" width="1920" height="1039" viewBox="0 0 1920 1039">
<path d="M788.5 145.5 L803 158" stroke="#333" stroke-width="2.2" stroke-linecap="round"/><path d="M788 146 q-3 4 -3 9" stroke="#e8a020" stroke-width=".8" fill="none"/><g transform="translate(782.5 155)"><path d="M0 3 Q5 -2 10 3 Q5 7 0 3Z" fill="#eee" stroke="#333" stroke-width=".9"/><circle cx="5" cy="3" r="2" fill="#222"/></g>
<path d="M789 173 l4 -2 q2.5 2 5 0 l4 2 l2 4 l-3 1.5 l0 9 l-11 0 l0 -9 l-3 -1.5z" fill="#fdfdfd" stroke="#ccc" stroke-width=".5"/><g transform="translate(782.5 184)"><path d="M0 3 Q5 -2 10 3 Q5 7 0 3Z" fill="#eee" stroke="#333" stroke-width=".9"/><circle cx="5" cy="3" r="2" fill="#222"/></g>
<circle cx="794" cy="209.5" r="8.5" fill="#4a4a4a"/><text x="794" y="215" font-family="'Liberation Serif',serif" font-style="italic" font-weight="bold" font-size="15" fill="#f5a515" text-anchor="middle">i</text><g transform="translate(782.5 213.5)"><path d="M0 3 Q5 -2 10 3 Q5 7 0 3Z" fill="#eee" stroke="#333" stroke-width=".9"/><circle cx="5" cy="3" r="2" fill="#222"/></g>
<path d="M786 236 l3 11 l9 0 l3 -11z" fill="#f4f4f4" stroke="#999" stroke-width=".6"/><path d="M790 245 l3 -14 q5 -2 9 0 l-2 13 q-5 3 -10 1z" fill="#f7a000"/><path d="M791 244 l2.5 -12 q3 -1 5 -.5 l-2.5 12z" fill="#ffc21a"/>
<path d="M789 260 l4 -2 q2.5 2 5 0 l4 2 l2 4 l-3 1.5 l0 9 l-11 0 l0 -9 l-3 -1.5z" fill="#f4f4f4" stroke="#ddd" stroke-width=".5"/><rect x="783.5" y="271" width="5.5" height="5" fill="#777"/><path d="M784.7 271 v-1.5 a1.6 1.6 0 0 1 3.2 0 v1.5" stroke="#777" stroke-width="1" fill="none"/>
</svg>
</div>

<!-- RIGHT PANEL -->
<div class="abs" style="left:1496px;top:42px;width:6px;height:967px;background:#242424"></div>
<div class="abs" style="left:1501px;top:42px;width:1px;height:967px;background:#151515"></div>
<div class="abs" style="left:1502px;top:62px;width:413px;height:419px;background:#262626"></div>
<svg class="abs" style="left:1502px;top:46px" width="9" height="9" viewBox="0 0 9 9"><path d="M0 3h4V0.5L8.5 4.5L4 8.5V6H0z" fill="#a2a2a2"/></svg>
<div class="abs" style="left:1513px;top:43px;width:1px;height:18px;background:#2e2e31"></div>
<svg class="abs" style="left:1898px;top:45px" width="11" height="10" viewBox="0 0 11 10"><path d="M5 2.5H.6V9.4H7.5V6" stroke="#8d8d8d" stroke-width="1.1" fill="none"/><path d="M4.5 6L10 .8M6.5 .6H10.3V4.2" stroke="#8d8d8d" stroke-width="1.1" fill="none"/></svg>
<svg class="abs" style="left:1479px;top:45px" width="11" height="10" viewBox="0 0 11 10"><path d="M5 2.5H.6V9.4H7.5V6" stroke="#8d8d8d" stroke-width="1.1" fill="none"/><path d="M4.5 6L10 .8M6.5 .6H10.3V4.2" stroke="#8d8d8d" stroke-width="1.1" fill="none"/></svg>
<svg class="abs" style="left:747px;top:45px" width="11" height="10" viewBox="0 0 11 10"><path d="M5 2.5H.6V9.4H7.5V6" stroke="#8d8d8d" stroke-width="1.1" fill="none"/><path d="M4.5 6L10 .8M6.5 .6H10.3V4.2" stroke="#8d8d8d" stroke-width="1.1" fill="none"/></svg>
<div class="abs" style="left:1502px;top:62px;width:413px;height:25px;background:#262626;border-bottom:1px solid #161616"></div>
<div class="abs" style="left:1502px;top:62px;width:55px;height:24px;line-height:27px;text-align:center;font-size:12px;letter-spacing:-0.3px;background:linear-gradient(#181818,#202020);color:#6f6f6f;border-right:1px solid #2b2b2b">Scene</div>
<div class="abs" style="left:1557px;top:62px;width:53px;height:24px;line-height:27px;text-align:center;font-size:12px;letter-spacing:-0.35px;background:linear-gradient(#343434,#262626);color:#fff;border-left:1px solid #3b3b3b;border-right:1px solid #3b3b3b;border-top:1px solid #3e3e3e">Fabric</div>
<div class="abs" style="left:1610px;top:62px;width:58px;height:24px;line-height:27px;text-align:center;font-size:12px;letter-spacing:0.4px;background:linear-gradient(#181818,#202020);color:#6f6f6f;border-right:1px solid #2b2b2b">Button</div>
<div class="abs" style="left:1668px;top:62px;width:87px;height:24px;line-height:27px;text-align:center;font-size:12px;letter-spacing:0.25px;background:linear-gradient(#181818,#202020);color:#6f6f6f;border-right:1px solid #2b2b2b">Button Hole</div>
<div class="abs" style="left:1755px;top:62px;width:75px;height:24px;line-height:27px;text-align:center;font-size:12px;letter-spacing:0.4px;background:linear-gradient(#181818,#202020);color:#6f6f6f;border-right:1px solid #2b2b2b">TopStitch</div>
<div class="abs" style="left:1714px;top:104px;width:58px;height:21px;background:#2d2d2d;border:1px solid #333;box-shadow:0 1px 0 #1c1c1c;color:#c9c9c9;font-size:12px;line-height:21px;white-space:nowrap"><svg class="abs" style="left:7px;top:5px" width="10" height="10" viewBox="0 0 10 10"><path d="M5 .5V9.5M.5 5H9.5" stroke="#c9c9c9" stroke-width="1.4"/></svg><span style="position:absolute;left:24px;top:0">Add</span></div>
<div class="abs" style="left:1775px;top:104px;width:62px;height:21px;background:#2d2d2d;border:1px solid #333;box-shadow:0 1px 0 #1c1c1c;color:#4d4d4d;font-size:12px;line-height:21px;white-space:nowrap"><svg class="abs" style="left:7px;top:4px" width="11" height="12" viewBox="0 0 11 12"><rect x="2.5" y=".5" width="7" height="8.5" fill="#3a3a3a"/><rect x=".5" y="2.5" width="7" height="8.5" fill="#383838" stroke="#2b2b2b" stroke-width=".6"/></svg><span style="position:absolute;left:24px;top:0">Copy</span></div>
<div class="abs" style="left:1841px;top:104px;width:70px;height:21px;background:#2d2d2d;border:1px solid #333;box-shadow:0 1px 0 #1c1c1c;color:#4d4d4d;font-size:12px;line-height:21px;white-space:nowrap"><svg class="abs" style="left:6px;top:4px" width="13" height="12" viewBox="0 0 13 12"><rect x=".5" y="3.5" width="7" height="7.5" fill="#3a3a3a"/><rect x="8" y="1" width="2.2" height="2.2" fill="#3a3a3a"/></svg><span style="position:absolute;left:24px;top:0">Assign</span></div>
<div class="abs" style="left:1512px;top:132px;width:396px;height:1px;background:#1a1a1a"></div>
<div class="abs" style="left:1600px;top:138px;height:37px;line-height:38px;font-size:12px;letter-spacing:-.55px;color:#b2b2b2">FABRIC 1</div>
<div class="abs" style="left:1517px;top:178px;width:384px;height:1px;background:#1b1b1b"></div>
<div class="abs" style="left:1600px;top:184px;height:37px;line-height:38px;font-size:12px;letter-spacing:-.55px;color:#b2b2b2">FABRIC 2</div>
<div class="abs" style="left:1517px;top:224px;width:384px;height:1px;background:#1b1b1b"></div>
<div class="abs" style="left:1600px;top:230px;height:37px;line-height:38px;font-size:12px;letter-spacing:-.55px;color:#b2b2b2">FABRIC 3</div>
<div class="abs" style="left:1517px;top:270px;width:384px;height:1px;background:#1b1b1b"></div>
<div class="abs" style="left:1600px;top:276px;height:37px;line-height:38px;font-size:12px;letter-spacing:-.55px;color:#b2b2b2">FABRIC 4</div>
<div class="abs" style="left:1517px;top:316px;width:384px;height:1px;background:#1b1b1b"></div>
<div class="abs" style="left:1600px;top:322px;height:37px;line-height:38px;font-size:12px;letter-spacing:-.55px;color:#b2b2b2">FABRIC 5</div>
<div class="abs" style="left:1517px;top:362px;width:384px;height:1px;background:#1b1b1b"></div>
<svg class="abs" style="left:0;top:0" width="1920" height="400" viewBox="0 0 1920 400">
<path d="M1528 155.5 l3.8 3.6 l8.6 -6.6" stroke="#f7b500" stroke-width="2.6" fill="none" stroke-linejoin="miter"/>
<rect x="1553" y="138" width="37" height="37" fill="#ebebeb"/>
<g fill="none" stroke="#c4c4c4" stroke-width=".6"><path d="M1556 156v-8q2-1 2-3l3-1l2 2l-1 10zM1566 156v-10l3 1l-1 9zM1575 156v-6q2-2 2-5l3 2l-1 9zM1583 156v-6l2-4l3 4v6zM1556 171v-8l2-3l3 0v11zM1563 171v-8l2-3q3 2 6 0l2 3v8zM1577 171v-8l2-3v11zM1582 171v-8l3-3l3 3v8z"/></g>
<path d="M1555 148v7M1557 146l2-3M1562 143l3 3M1567 165h3" stroke="#d08080" stroke-width=".6" fill="none"/><path d="M1566 141h5M1578 142h8" stroke="#9a9ad8" stroke-width=".7"/>
<rect x="1553" y="184" width="37" height="37" fill="#fff"/>
<rect x="1553" y="230" width="37" height="37" fill="#fcfcfc"/>
<g fill="none" stroke="#dcdcdc" stroke-width=".6"><path d="M1557 233l8 0l2 8l-3 2l3 22l-9 0zM1571 233l9 0l1 9l-2 23l-9 0l-2-22l3-2z"/></g><rect x="1573.5" y="231.5" width="2" height="2" fill="#e0533a"/><path d="M1560 239h4M1577 239h4" stroke="#aaa" stroke-width=".6"/>
<rect x="1553" y="276" width="37" height="37" fill="#fff"/>
<g fill="#3ea3e0" transform="translate(1553 276)"><path d="M11.5 23 C13 27 16 30 18 33 L25.5 30 C25 27 25.5 24 26 21 L26.5 10.5 C26.5 9 24.7 9 24.6 10.5 L23.8 18 L23 18 L23.6 7.5 C23.6 6 21.6 6 21.5 7.5 L20.6 17.5 L19.8 17.5 L19.4 6.5 C19.4 5 17.3 5 17.3 6.5 L17.4 18 L16.6 18.3 L14.8 9.5 C14.5 8 12.6 8.5 12.9 10 L14.5 22 L13.8 23.5 L9.5 18.5 C8.3 17.3 6.5 18.5 7.6 20Z"/><path d="M17 33 l9 -3.5 l.8 2 l-9 3.5z" fill="#6cbcee"/></g>
<rect x="1553" y="322" width="37" height="37" fill="#00bfff"/>
</svg>
<div class="abs" style="left:1502px;top:481px;width:413px;height:6px;background:#242424;border-top:1px solid #151515"></div>
<div class="abs" style="left:1502px;top:487px;width:413px;height:19px;background:#1f1f22;color:#a2a2a2;font-size:12px;line-height:19px;text-align:center"><span style="position:relative;left:-4px;top:1px;letter-spacing:.18px">Property Editor</span></div>
<svg class="abs" style="left:1502px;top:490px" width="9" height="9" viewBox="0 0 9 9"><path d="M0 3h4V0.5L8.5 4.5L4 8.5V6H0z" fill="#a2a2a2"/></svg>
<div class="abs" style="left:1513px;top:488px;width:1px;height:17px;background:#2e2e31"></div>
<svg class="abs" style="left:1898px;top:489px" width="11" height="10" viewBox="0 0 11 10"><path d="M5 2.5H.6V9.4H7.5V6" stroke="#8d8d8d" stroke-width="1.1" fill="none"/><path d="M4.5 6L10 .8M6.5 .6H10.3V4.2" stroke="#8d8d8d" stroke-width="1.1" fill="none"/></svg>
<div class="abs" style="left:1502px;top:506px;width:413px;height:502px;background:#262626"></div>
<div class="abs" style="left:1502px;top:1008px;width:413px;height:1px;background:#151515"></div>

<!-- STATUS -->
<div id="status"></div>
<div class="abs" style="left:15px;top:1016px;font-size:9px;letter-spacing:.33px;color:#4a4a4a;line-height:12px">Version: 6.0.351 (r32317)</div>
<svg class="abs" style="left:1770px;top:1010px" width="140" height="24" viewBox="1770 1010 140 24" font-family="'Liberation Sans',sans-serif">
<rect x="1780.8" y="1016.8" width="17.6" height="13.4" fill="none" stroke="#a8a8a8" stroke-width="1.5"/><path d="M1789.6 1017V1030" stroke="#a8a8a8" stroke-width="1.3"/>
<rect x="1811.8" y="1016.8" width="17.6" height="13.4" fill="none" stroke="#a8a8a8" stroke-width="1.5"/><text x="1820.6" y="1027.3" font-size="9" font-weight="bold" fill="#a8a8a8" text-anchor="middle">3D</text>
<rect x="1842.8" y="1016.8" width="17.6" height="13.4" fill="none" stroke="#a8a8a8" stroke-width="1.5"/><text x="1851.6" y="1027.3" font-size="9" font-weight="bold" fill="#a8a8a8" text-anchor="middle">2D</text>
<path d="M1873.5 1015v17" stroke="#2e2e2e" stroke-width="1"/>
<rect x="1884" y="1016" width="17" height="16" fill="#2e2e2e"/>
<path d="M1896.3 1026.2a4 4 0 1 1 -1.6 -5.2" stroke="#cfcfcf" stroke-width="1.5" fill="none"/><path d="M1893.2 1019.2h4.3v4.3z" fill="#cfcfcf"/>
</svg>

</div></div>
</body>
</html>
